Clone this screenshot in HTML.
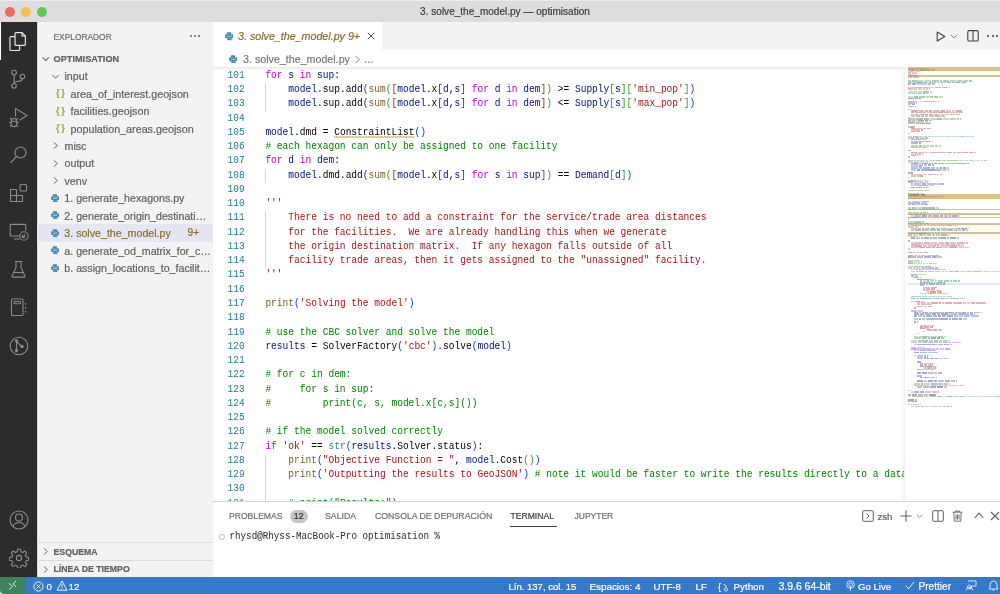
<!DOCTYPE html>
<html><head><meta charset="utf-8"><style>
*{margin:0;padding:0;box-sizing:border-box}
html,body{width:1000px;height:594px;overflow:hidden;background:#fff}
body{position:relative;font-family:'Liberation Sans', sans-serif}
div{-webkit-text-stroke:0.2px currentColor}
.ln,.cl{-webkit-text-stroke:0;transform:translateY(0.4px) scaleY(1.1);transform-origin:0 9.68px}
.abs{position:absolute}
.ln{position:absolute;left:213px;width:31.8px;text-align:right;font:9.55px/14.262px 'Liberation Mono', monospace;color:#237893;white-space:pre;height:14.262px}
.cl{position:absolute;left:265.4px;font:9.55px/14.262px 'Liberation Mono', monospace;color:#000;white-space:pre;height:14.262px}
.ig{position:absolute;left:265px;width:1px;background:#d8d8d8}
.ai svg{position:absolute}
</style></head><body>
<div style="position:absolute;left:0;top:0;width:1000px;height:594px;will-change:transform">
<!-- title bar -->
<div class="abs" style="left:0;top:0;width:1000px;height:22px;background:#dddddd;border-top:1px solid #ececec"></div>
<div class="abs" style="left:5px;top:6.8px;width:9.8px;height:9.8px;border-radius:50%;background:#ec6a5e"></div>
<div class="abs" style="left:21px;top:6.8px;width:9.8px;height:9.8px;border-radius:50%;background:#f4bf4f"></div>
<div class="abs" style="left:37px;top:6.8px;width:9.8px;height:9.8px;border-radius:50%;background:#61c554"></div>
<div class="abs" style="left:0;top:5px;width:1010px;text-align:center;font:400 10.05px/14px 'Liberation Sans', sans-serif;color:#3c3c3c">3. solve_the_model.py — optimisation</div>

<!-- activity bar -->
<div class="abs" style="left:0;top:22px;width:37px;height:555px;background:#2c2c2c"></div>
<div class="abs" style="left:0;top:22px;width:1.3px;height:37.5px;background:#ffffff"></div>
<div class="ai">
<svg style="left:8px;top:31px" width="20" height="22" viewBox="0 0 20 22" fill="none" stroke="#e8e8e8" stroke-width="1.15">
 <path d="M7.05 2.6 q0 -0.95 0.95 -0.95 H14 L17.35 5 V13.4 q0 0.95 -0.95 0.95 H8 q-0.95 0 -0.95 -0.95 Z"/>
 <path d="M14 1.65 V5 H17.35"/>
 <path d="M7.05 5.65 H2.9 q-0.95 0 -0.95 0.95 V18.5 q0 0.95 0.95 0.95 H10.7 q0.95 0 0.95 -0.95 V14.35"/>
</svg>
<svg style="left:9px;top:69px" width="19" height="20" viewBox="0 0 19 20" fill="none" stroke="#8b8b8b" stroke-width="1.1">
 <circle cx="5.1" cy="3.5" r="2.3"/><circle cx="5" cy="16.8" r="2.3"/><circle cx="13.4" cy="7.5" r="2.3"/>
 <path d="M5.1 5.8 v8.7"/><path d="M13.2 9.8 q0 1.8 -1.8 2.1 l-4.6 0.9 q-1.6 0.4 -1.8 1.7"/>
</svg>
<svg style="left:7.5px;top:107px" width="21" height="21" viewBox="0 0 21 21" fill="none" stroke="#8b8b8b" stroke-width="1.1">
 <path d="M7.5 9.5 V1.5 L19 8.5 L11.5 13.3"/>
 <path d="M3.3 14.3 q0 -2.8 2.7 -2.8 q2.7 0 2.7 2.8 v2.5 q0 2.8 -2.7 2.8 q-2.7 0 -2.7 -2.8z"/><path d="M3.3 14.3 h5.4"/>
 <path d="M3.3 15.5 h-2 M8.7 15.5 h2 M3.6 12.5 l-1.6 -1.2 M8.4 12.5 l1.6 -1.2 M3.6 18.3 l-1.6 1.2 M8.4 18.3 l1.6 1.2"/>
</svg>
<svg style="left:9px;top:145px" width="20" height="20" viewBox="0 0 20 20" fill="none" stroke="#8b8b8b" stroke-width="1.2">
 <circle cx="11.5" cy="7.5" r="5.5"/><path d="M7.5 11.5 L1.5 17.8"/>
</svg>
<svg style="left:8.5px;top:183px" width="20" height="20" viewBox="0 0 20 20" fill="none" stroke="#8b8b8b" stroke-width="1.1">
 <path d="M1.5 6.5 h6 v12 h-6z M7.5 12.5 h6 v6 h-6z M1.5 12.5 h6"/><rect x="11" y="1.5" width="6.5" height="6.5" rx="1"/>
</svg>
<svg style="left:8.5px;top:223px" width="21" height="19" viewBox="0 0 21 19" fill="none" stroke="#8b8b8b" stroke-width="1.1">
 <path d="M11 13 h-9 q-0.8 0 -0.8 -0.8 v-10 q0 -0.8 0.8 -0.8 h14 q0.8 0 0.8 0.8 v5.3"/><path d="M5 16 h6"/>
 <circle cx="15" cy="13" r="4.2"/><path d="M13.5 14.5 l3 -3 M13.5 12 v2.5 h2.5"/>
</svg>
<svg style="left:9.5px;top:260px" width="18" height="19" viewBox="0 0 18 19" fill="none" stroke="#8b8b8b" stroke-width="1.1">
 <path d="M5 1.5 h7 M6 1.5 v6 L2.2 15.8 q-0.5 1.3 0.8 1.3 h11 q1.3 0 0.8 -1.3 L11 7.5 v-6"/><path d="M3.6 12.5 h9.8"/>
</svg>
<svg style="left:10px;top:298px" width="18" height="19" viewBox="0 0 18 19" fill="none" stroke="#8b8b8b" stroke-width="1.1">
 <rect x="1.5" y="1" width="11.5" height="16.5" rx="1.3"/><rect x="4" y="3.5" width="6.5" height="2.2" rx="0.6"/>
 <path d="M15.5 5 v1.5 M15.5 9 v1.5 M15.5 13 v1.5" stroke-width="1.3"/>
</svg>
<svg style="left:8.5px;top:335.7px" width="20" height="20" viewBox="0 0 20 20" fill="none" stroke="#8b8b8b" stroke-width="1.1">
 <circle cx="10" cy="10" r="8.8"/><path d="M7.5 4.5 v10 M7.5 5.5 l5.5 5"/><circle cx="7.5" cy="4.8" r="1.1" fill="#8b8b8b"/><circle cx="7.5" cy="14.6" r="1.1" fill="#8b8b8b"/><circle cx="13" cy="10.5" r="1.1" fill="#8b8b8b"/>
</svg>
<svg style="left:8.8px;top:509.8px" width="20" height="20" viewBox="0 0 20 20" fill="none" stroke="#8b8b8b" stroke-width="1.1">
 <circle cx="10" cy="10" r="9"/><circle cx="10" cy="7.5" r="3.5"/><path d="M4 16.5 q1.5 -4 6 -4 q4.5 0 6 4"/>
</svg>
<svg style="left:8.5px;top:548px" width="20" height="20" viewBox="0 0 20 20" fill="none" stroke="#8b8b8b" stroke-width="1.1">
 <path d="M8.6 1.2 h2.8 l0.5 2.5 l1.7 0.8 l2.2 -1.5 l2 2 l-1.5 2.2 l0.8 1.7 l2.5 0.5 v2.8 l-2.5 0.5 l-0.8 1.7 l1.5 2.2 l-2 2 l-2.2 -1.5 l-1.7 0.8 l-0.5 2.5 h-2.8 l-0.5 -2.5 l-1.7 -0.8 l-2.2 1.5 l-2 -2 l1.5 -2.2 l-0.8 -1.7 l-2.5 -0.5 v-2.8 l2.5 -0.5 l0.8 -1.7 l-1.5 -2.2 l2 -2 l2.2 1.5 l1.7 -0.8z"/>
 <circle cx="10" cy="10" r="2.6"/>
</svg>
</div>

<!-- sidebar -->
<div class="abs" style="left:37px;top:22px;width:176px;height:555px;background:#f3f3f3;border-left:1px solid #d6d6d6">

</div>
<div class="abs" style="left:0;top:0;width:213px;height:577px;overflow:hidden">
<div style="position:absolute;left:53.5px;top:31px;font:400 8.4px 'Liberation Sans', sans-serif;color:#6f6f6f;line-height:12px">EXPLORADOR</div><div style="position:absolute;left:189.5px;top:35px;width:2px;height:2px;border-radius:50%;background:#616161"></div><div style="position:absolute;left:193.8px;top:35px;width:2px;height:2px;border-radius:50%;background:#616161"></div><div style="position:absolute;left:198.1px;top:35px;width:2px;height:2px;border-radius:50%;background:#616161"></div><svg style="position:absolute;left:40.5px;top:54.25px" width="9.5" height="9.5" viewBox="0 0 16 16"><path d="M2.5 5.5 L8 11 L13.5 5.5" fill="none" stroke="#555555" stroke-width="1.7"/></svg><div style="position:absolute;left:53.5px;margin-top:1.3px;top:52.75px;height:17.45px;line-height:17.45px;font:700 9.2px 'Liberation Sans', sans-serif;color:#616161;white-space:nowrap;">OPTIMISATION</div><svg style="position:absolute;left:51px;top:71.7px" width="9" height="9" viewBox="0 0 16 16"><path d="M2.5 5.5 L8 11 L13.5 5.5" fill="none" stroke="#505050" stroke-width="1.7"/></svg><div style="position:absolute;left:64.5px;top:70.20px;height:17.45px;line-height:17.45px;font:400 10.7px 'Liberation Sans', sans-serif;color:#616161;white-space:nowrap;">input</div><div style="position:absolute;left:56px;top:88.15px;font:700 9.3px 'Liberation Sans', sans-serif;color:#aaaa3c;letter-spacing:1.6px;line-height:11px">{}</div><div style="position:absolute;left:70.5px;top:87.65px;height:17.45px;line-height:17.45px;font:400 10.75px 'Liberation Sans', sans-serif;color:#616161;white-space:nowrap;">area_of_interest.geojson</div><div style="position:absolute;left:56px;top:105.6px;font:700 9.3px 'Liberation Sans', sans-serif;color:#aaaa3c;letter-spacing:1.6px;line-height:11px">{}</div><div style="position:absolute;left:70.5px;top:105.10px;height:17.45px;line-height:17.45px;font:400 10.75px 'Liberation Sans', sans-serif;color:#616161;white-space:nowrap;">facilities.geojson</div><div style="position:absolute;left:56px;top:123.05px;font:700 9.3px 'Liberation Sans', sans-serif;color:#aaaa3c;letter-spacing:1.6px;line-height:11px">{}</div><div style="position:absolute;left:70.5px;top:122.55px;height:17.45px;line-height:17.45px;font:400 10.75px 'Liberation Sans', sans-serif;color:#616161;white-space:nowrap;">population_areas.geojson</div><svg style="position:absolute;left:50.5px;top:141.3px" width="9" height="9" viewBox="0 0 16 16"><path d="M5.5 2.5 L11 8 L5.5 13.5" fill="none" stroke="#505050" stroke-width="1.7"/></svg><div style="position:absolute;left:64.5px;top:140.00px;height:17.45px;line-height:17.45px;font:400 10.7px 'Liberation Sans', sans-serif;color:#616161;white-space:nowrap;">misc</div><svg style="position:absolute;left:50.5px;top:158.75px" width="9" height="9" viewBox="0 0 16 16"><path d="M5.5 2.5 L11 8 L5.5 13.5" fill="none" stroke="#505050" stroke-width="1.7"/></svg><div style="position:absolute;left:64.5px;top:157.45px;height:17.45px;line-height:17.45px;font:400 10.7px 'Liberation Sans', sans-serif;color:#616161;white-space:nowrap;">output</div><svg style="position:absolute;left:50.5px;top:176.2px" width="9" height="9" viewBox="0 0 16 16"><path d="M5.5 2.5 L11 8 L5.5 13.5" fill="none" stroke="#505050" stroke-width="1.7"/></svg><div style="position:absolute;left:64.5px;top:174.90px;height:17.45px;line-height:17.45px;font:400 10.7px 'Liberation Sans', sans-serif;color:#616161;white-space:nowrap;">venv</div><div style="position:absolute;left:37px;top:224.25px;width:176px;height:17.45px;background:#e4e6f1"></div><svg style="position:absolute;left:51px;top:193.85px" width="8.3" height="8.3" viewBox="0 0 16 16"><path d="M5 0.4 H10.2 Q11.8 0.4 11.8 2 V5.8 Q11.8 7.3 10.3 7.3 H5.7 Q4 7.3 4 9 V11.8 H2 Q0.3 11.8 0.3 10.1 V6.1 Q0.3 4.4 2 4.4 H8.2 V3.8 H3.3 V2 Q3.3 0.4 5 0.4 Z" fill="#4a87b0"/><path d="M5 0.4 H10.2 Q11.8 0.4 11.8 2 V5.8 Q11.8 7.3 10.3 7.3 H5.7 Q4 7.3 4 9 V11.8 H2 Q0.3 11.8 0.3 10.1 V6.1 Q0.3 4.4 2 4.4 H8.2 V3.8 H3.3 V2 Q3.3 0.4 5 0.4 Z" fill="#4a87b0" transform="rotate(180 8 8)"/></svg><div style="position:absolute;left:64.3px;top:192.35px;height:17.45px;line-height:17.45px;font:400 10.65px 'Liberation Sans', sans-serif;color:#616161;white-space:nowrap;width:148px;overflow:hidden">1. generate_hexagons.py</div><svg style="position:absolute;left:51px;top:211.29999999999998px" width="8.3" height="8.3" viewBox="0 0 16 16"><path d="M5 0.4 H10.2 Q11.8 0.4 11.8 2 V5.8 Q11.8 7.3 10.3 7.3 H5.7 Q4 7.3 4 9 V11.8 H2 Q0.3 11.8 0.3 10.1 V6.1 Q0.3 4.4 2 4.4 H8.2 V3.8 H3.3 V2 Q3.3 0.4 5 0.4 Z" fill="#4a87b0"/><path d="M5 0.4 H10.2 Q11.8 0.4 11.8 2 V5.8 Q11.8 7.3 10.3 7.3 H5.7 Q4 7.3 4 9 V11.8 H2 Q0.3 11.8 0.3 10.1 V6.1 Q0.3 4.4 2 4.4 H8.2 V3.8 H3.3 V2 Q3.3 0.4 5 0.4 Z" fill="#4a87b0" transform="rotate(180 8 8)"/></svg><div style="position:absolute;left:64.3px;top:209.80px;height:17.45px;line-height:17.45px;font:400 10.65px 'Liberation Sans', sans-serif;color:#616161;white-space:nowrap;width:148px;overflow:hidden">2. generate_origin_destinati…</div><svg style="position:absolute;left:51px;top:228.75px" width="8.3" height="8.3" viewBox="0 0 16 16"><path d="M5 0.4 H10.2 Q11.8 0.4 11.8 2 V5.8 Q11.8 7.3 10.3 7.3 H5.7 Q4 7.3 4 9 V11.8 H2 Q0.3 11.8 0.3 10.1 V6.1 Q0.3 4.4 2 4.4 H8.2 V3.8 H3.3 V2 Q3.3 0.4 5 0.4 Z" fill="#4a87b0"/><path d="M5 0.4 H10.2 Q11.8 0.4 11.8 2 V5.8 Q11.8 7.3 10.3 7.3 H5.7 Q4 7.3 4 9 V11.8 H2 Q0.3 11.8 0.3 10.1 V6.1 Q0.3 4.4 2 4.4 H8.2 V3.8 H3.3 V2 Q3.3 0.4 5 0.4 Z" fill="#4a87b0" transform="rotate(180 8 8)"/></svg><div style="position:absolute;left:64.3px;top:227.25px;height:17.45px;line-height:17.45px;font:400 10.65px 'Liberation Sans', sans-serif;color:#8a6d2a;white-space:nowrap;width:148px;overflow:hidden">3. solve_the_model.py</div><svg style="position:absolute;left:51px;top:246.2px" width="8.3" height="8.3" viewBox="0 0 16 16"><path d="M5 0.4 H10.2 Q11.8 0.4 11.8 2 V5.8 Q11.8 7.3 10.3 7.3 H5.7 Q4 7.3 4 9 V11.8 H2 Q0.3 11.8 0.3 10.1 V6.1 Q0.3 4.4 2 4.4 H8.2 V3.8 H3.3 V2 Q3.3 0.4 5 0.4 Z" fill="#4a87b0"/><path d="M5 0.4 H10.2 Q11.8 0.4 11.8 2 V5.8 Q11.8 7.3 10.3 7.3 H5.7 Q4 7.3 4 9 V11.8 H2 Q0.3 11.8 0.3 10.1 V6.1 Q0.3 4.4 2 4.4 H8.2 V3.8 H3.3 V2 Q3.3 0.4 5 0.4 Z" fill="#4a87b0" transform="rotate(180 8 8)"/></svg><div style="position:absolute;left:64.3px;top:244.70px;height:17.45px;line-height:17.45px;font:400 10.65px 'Liberation Sans', sans-serif;color:#616161;white-space:nowrap;width:148px;overflow:hidden">a. generate_od_matrix_for_c…</div><svg style="position:absolute;left:51px;top:263.65px" width="8.3" height="8.3" viewBox="0 0 16 16"><path d="M5 0.4 H10.2 Q11.8 0.4 11.8 2 V5.8 Q11.8 7.3 10.3 7.3 H5.7 Q4 7.3 4 9 V11.8 H2 Q0.3 11.8 0.3 10.1 V6.1 Q0.3 4.4 2 4.4 H8.2 V3.8 H3.3 V2 Q3.3 0.4 5 0.4 Z" fill="#4a87b0"/><path d="M5 0.4 H10.2 Q11.8 0.4 11.8 2 V5.8 Q11.8 7.3 10.3 7.3 H5.7 Q4 7.3 4 9 V11.8 H2 Q0.3 11.8 0.3 10.1 V6.1 Q0.3 4.4 2 4.4 H8.2 V3.8 H3.3 V2 Q3.3 0.4 5 0.4 Z" fill="#4a87b0" transform="rotate(180 8 8)"/></svg><div style="position:absolute;left:64.3px;top:262.15px;height:17.45px;line-height:17.45px;font:400 10.65px 'Liberation Sans', sans-serif;color:#616161;white-space:nowrap;width:148px;overflow:hidden">b. assign_locations_to_facilit…</div><div style="position:absolute;left:187.5px;top:227.25px;height:17.45px;line-height:17.45px;font:400 10.3px 'Liberation Sans', sans-serif;color:#8a6d2a;white-space:nowrap;">9+</div><div style="position:absolute;left:37px;top:542px;width:176px;height:1px;background:#dcdcdc"></div><div style="position:absolute;left:37px;top:560.3px;width:176px;height:1px;background:#dcdcdc"></div><svg style="position:absolute;left:40.5px;top:547px" width="9" height="9" viewBox="0 0 16 16"><path d="M5.5 2.5 L11 8 L5.5 13.5" fill="none" stroke="#505050" stroke-width="1.7"/></svg><div style="position:absolute;left:53.5px;top:544.6px;font:700 8.73px 'Liberation Sans', sans-serif;color:#616161;line-height:14px">ESQUEMA</div><svg style="position:absolute;left:40.5px;top:564.5px" width="9" height="9" viewBox="0 0 16 16"><path d="M5.5 2.5 L11 8 L5.5 13.5" fill="none" stroke="#505050" stroke-width="1.7"/></svg><div style="position:absolute;left:53.5px;top:562.4px;font:700 8.73px 'Liberation Sans', sans-serif;color:#616161;line-height:14px">LÍNEA DE TIEMPO</div>
</div>

<!-- editor tabs -->
<div class="abs" style="left:213px;top:22px;width:787px;height:28px;background:#f3f3f3"></div>
<div class="abs" style="left:213px;top:22px;width:169px;height:28px;background:#ffffff"></div>
<svg style="position:absolute;left:224.5px;top:32px" width="8.5" height="8.5" viewBox="0 0 16 16"><path d="M5 0.4 H10.2 Q11.8 0.4 11.8 2 V5.8 Q11.8 7.3 10.3 7.3 H5.7 Q4 7.3 4 9 V11.8 H2 Q0.3 11.8 0.3 10.1 V6.1 Q0.3 4.4 2 4.4 H8.2 V3.8 H3.3 V2 Q3.3 0.4 5 0.4 Z" fill="#4a87b0"/><path d="M5 0.4 H10.2 Q11.8 0.4 11.8 2 V5.8 Q11.8 7.3 10.3 7.3 H5.7 Q4 7.3 4 9 V11.8 H2 Q0.3 11.8 0.3 10.1 V6.1 Q0.3 4.4 2 4.4 H8.2 V3.8 H3.3 V2 Q3.3 0.4 5 0.4 Z" fill="#4a87b0" transform="rotate(180 8 8)"/></svg>
<div class="abs" style="left:238px;top:29px;font:italic 400 10.7px/14px 'Liberation Sans', sans-serif;color:#8a6d2a;white-space:nowrap">3. solve_the_model.py 9+</div>
<svg style="position:absolute;left:366px;top:31px" width="10" height="10" viewBox="0 0 10 10"><path d="M1.8 1.8 L8.2 8.2 M8.2 1.8 L1.8 8.2" stroke="#4a4a4a" stroke-width="0.95"/></svg>
<svg style="position:absolute;left:936px;top:31px" width="10" height="11" viewBox="0 0 10 11"><path d="M1.2 1 L8.8 5.5 L1.2 10z" fill="none" stroke="#424242" stroke-width="1.1" stroke-linejoin="round"/></svg>
<svg style="position:absolute;left:950px;top:34px" width="8" height="5" viewBox="0 0 8 5"><path d="M0.8 0.8 L4 4 L7.2 0.8" fill="none" stroke="#7a7a7a" stroke-width="0.9"/></svg>
<svg style="position:absolute;left:966.5px;top:30px" width="12" height="12" viewBox="0 0 12 12"><rect x="0.8" y="0.6" width="10.4" height="10.4" rx="1.3" fill="none" stroke="#424242" stroke-width="1.1"/><path d="M6 0.6 V11" stroke="#424242" stroke-width="1.1"/></svg>
<div class="abs" style="left:987px;top:35px;width:2.2px;height:2.2px;border-radius:50%;background:#424242"></div>
<div class="abs" style="left:991.5px;top:35px;width:2.2px;height:2.2px;border-radius:50%;background:#424242"></div>
<div class="abs" style="left:996px;top:35px;width:2.2px;height:2.2px;border-radius:50%;background:#424242"></div>

<!-- breadcrumbs -->
<svg style="position:absolute;left:228.5px;top:54.5px" width="8.5" height="8.5" viewBox="0 0 16 16"><path d="M5 0.4 H10.2 Q11.8 0.4 11.8 2 V5.8 Q11.8 7.3 10.3 7.3 H5.7 Q4 7.3 4 9 V11.8 H2 Q0.3 11.8 0.3 10.1 V6.1 Q0.3 4.4 2 4.4 H8.2 V3.8 H3.3 V2 Q3.3 0.4 5 0.4 Z" fill="#4a87b0"/><path d="M5 0.4 H10.2 Q11.8 0.4 11.8 2 V5.8 Q11.8 7.3 10.3 7.3 H5.7 Q4 7.3 4 9 V11.8 H2 Q0.3 11.8 0.3 10.1 V6.1 Q0.3 4.4 2 4.4 H8.2 V3.8 H3.3 V2 Q3.3 0.4 5 0.4 Z" fill="#4a87b0" transform="rotate(180 8 8)"/></svg>
<div class="abs" style="left:243px;top:52px;font:400 10.69px/14px 'Liberation Sans', sans-serif;color:#777777;white-space:nowrap">3. solve_the_model.py</div>
<svg style="position:absolute;left:354px;top:54.5px" width="7" height="9" viewBox="0 0 7 9"><path d="M1.5 0.8 L5.2 4.5 L1.5 8.2" fill="none" stroke="#6f6f6f" stroke-width="0.9"/></svg>
<div class="abs" style="left:364px;top:52px;font:400 10.5px/14px 'Liberation Sans', sans-serif;color:#777777;letter-spacing:0.3px">...</div>
<div class="abs" style="left:213px;top:67px;width:690px;height:4px;background:linear-gradient(#e8e8e8,rgba(255,255,255,0))"></div>

<!-- code -->
<div class="abs" style="left:0;top:67px;width:904.3px;height:434px;overflow:hidden"><div class="abs" style="left:0;top:-67px;width:904.3px;height:600px">
<div class="ig" style="top:83.06px;height:28.52px"></div><div class="ig" style="top:168.63px;height:14.26px"></div><div class="ig" style="top:211.42px;height:57.05px"></div><div class="ig" style="top:453.87px;height:57.05px"></div>
<div class="ln" style="top:68.80px">101</div><div class="cl" style="top:68.80px"><span style="color:#af00db">for</span><span style="color:#000000"> </span><span style="color:#001080">s</span><span style="color:#000000"> </span><span style="color:#af00db">in</span><span style="color:#000000"> </span><span style="color:#001080">sup</span><span style="color:#000000">:</span></div><div class="ln" style="top:83.06px">102</div><div class="cl" style="top:83.06px"><span style="color:#000000"> </span><span style="color:#000000"> </span><span style="color:#000000"> </span><span style="color:#000000"> </span><span style="color:#001080">model</span><span style="color:#000000">.</span><span style="color:#000000">sup</span><span style="color:#000000">.</span><span style="color:#000000">add</span><span style="color:#0431fa">(</span><span style="color:#795e26">sum</span><span style="color:#319331">(</span><span style="color:#7b3814">[</span><span style="color:#001080">model</span><span style="color:#000000">.</span><span style="color:#000000">x</span><span style="color:#0431fa">[</span><span style="color:#001080">d</span><span style="color:#000000">,</span><span style="color:#001080">s</span><span style="color:#0431fa">]</span><span style="color:#000000"> </span><span style="color:#af00db">for</span><span style="color:#000000"> </span><span style="color:#001080">d</span><span style="color:#000000"> </span><span style="color:#af00db">in</span><span style="color:#000000"> </span><span style="color:#001080">dem</span><span style="color:#7b3814">]</span><span style="color:#319331">)</span><span style="color:#000000"> </span><span style="color:#000000">&gt;</span><span style="color:#000000">=</span><span style="color:#000000"> </span><span style="color:#001080">Supply</span><span style="color:#319331">[</span><span style="color:#001080">s</span><span style="color:#319331">]</span><span style="color:#319331">[</span><span style="color:#a31515">&#x27;min_pop&#x27;</span><span style="color:#319331">]</span><span style="color:#0431fa">)</span></div><div class="ln" style="top:97.32px">103</div><div class="cl" style="top:97.32px"><span style="color:#000000"> </span><span style="color:#000000"> </span><span style="color:#000000"> </span><span style="color:#000000"> </span><span style="color:#001080">model</span><span style="color:#000000">.</span><span style="color:#000000">sup</span><span style="color:#000000">.</span><span style="color:#000000">add</span><span style="color:#0431fa">(</span><span style="color:#795e26">sum</span><span style="color:#319331">(</span><span style="color:#7b3814">[</span><span style="color:#001080">model</span><span style="color:#000000">.</span><span style="color:#000000">x</span><span style="color:#0431fa">[</span><span style="color:#001080">d</span><span style="color:#000000">,</span><span style="color:#001080">s</span><span style="color:#0431fa">]</span><span style="color:#000000"> </span><span style="color:#af00db">for</span><span style="color:#000000"> </span><span style="color:#001080">d</span><span style="color:#000000"> </span><span style="color:#af00db">in</span><span style="color:#000000"> </span><span style="color:#001080">dem</span><span style="color:#7b3814">]</span><span style="color:#319331">)</span><span style="color:#000000"> </span><span style="color:#000000">&lt;</span><span style="color:#000000">=</span><span style="color:#000000"> </span><span style="color:#001080">Supply</span><span style="color:#319331">[</span><span style="color:#001080">s</span><span style="color:#319331">]</span><span style="color:#319331">[</span><span style="color:#a31515">&#x27;max_pop&#x27;</span><span style="color:#319331">]</span><span style="color:#0431fa">)</span></div><div class="ln" style="top:111.59px">104</div><div class="cl" style="top:111.59px"></div><div class="ln" style="top:125.85px">105</div><div class="cl" style="top:125.85px"><span style="color:#001080">model</span><span style="color:#000000">.</span><span style="color:#000000">dmd</span><span style="color:#000000"> </span><span style="color:#000000">=</span><span style="color:#000000"> </span><span style="color:#000000">ConstraintList</span><span style="color:#0431fa">(</span><span style="color:#0431fa">)</span></div><div class="ln" style="top:140.11px">106</div><div class="cl" style="top:140.11px"><span style="color:#008000"># each hexagon can only be assigned to one facility</span></div><div class="ln" style="top:154.37px">107</div><div class="cl" style="top:154.37px"><span style="color:#af00db">for</span><span style="color:#000000"> </span><span style="color:#001080">d</span><span style="color:#000000"> </span><span style="color:#af00db">in</span><span style="color:#000000"> </span><span style="color:#001080">dem</span><span style="color:#000000">:</span></div><div class="ln" style="top:168.63px">108</div><div class="cl" style="top:168.63px"><span style="color:#000000"> </span><span style="color:#000000"> </span><span style="color:#000000"> </span><span style="color:#000000"> </span><span style="color:#001080">model</span><span style="color:#000000">.</span><span style="color:#000000">dmd</span><span style="color:#000000">.</span><span style="color:#000000">add</span><span style="color:#0431fa">(</span><span style="color:#795e26">sum</span><span style="color:#319331">(</span><span style="color:#7b3814">[</span><span style="color:#001080">model</span><span style="color:#000000">.</span><span style="color:#000000">x</span><span style="color:#0431fa">[</span><span style="color:#001080">d</span><span style="color:#000000">,</span><span style="color:#001080">s</span><span style="color:#0431fa">]</span><span style="color:#000000"> </span><span style="color:#af00db">for</span><span style="color:#000000"> </span><span style="color:#001080">s</span><span style="color:#000000"> </span><span style="color:#af00db">in</span><span style="color:#000000"> </span><span style="color:#001080">sup</span><span style="color:#7b3814">]</span><span style="color:#319331">)</span><span style="color:#000000"> </span><span style="color:#000000">=</span><span style="color:#000000">=</span><span style="color:#000000"> </span><span style="color:#001080">Demand</span><span style="color:#319331">[</span><span style="color:#001080">d</span><span style="color:#319331">]</span><span style="color:#0431fa">)</span></div><div class="ln" style="top:182.90px">109</div><div class="cl" style="top:182.90px"></div><div class="ln" style="top:197.16px">110</div><div class="cl" style="top:197.16px"><span style="color:#a31515">&#x27;&#x27;&#x27;</span></div><div class="ln" style="top:211.42px">111</div><div class="cl" style="top:211.42px"><span style="color:#a31515">    There is no need to add a constraint for the service/trade area distances</span></div><div class="ln" style="top:225.68px">112</div><div class="cl" style="top:225.68px"><span style="color:#a31515">    for the facilities.  We are already handling this when we generate</span></div><div class="ln" style="top:239.94px">113</div><div class="cl" style="top:239.94px"><span style="color:#a31515">    the origin destination matrix.  If any hexagon falls outside of all</span></div><div class="ln" style="top:254.21px">114</div><div class="cl" style="top:254.21px"><span style="color:#a31515">    facility trade areas, then it gets assigned to the &quot;unassigned&quot; facility.</span></div><div class="ln" style="top:268.47px">115</div><div class="cl" style="top:268.47px"><span style="color:#a31515">&#x27;&#x27;&#x27;</span></div><div class="ln" style="top:282.73px">116</div><div class="cl" style="top:282.73px"></div><div class="ln" style="top:296.99px">117</div><div class="cl" style="top:296.99px"><span style="color:#795e26">print</span><span style="color:#0431fa">(</span><span style="color:#a31515">&#x27;Solving the model&#x27;</span><span style="color:#0431fa">)</span></div><div class="ln" style="top:311.25px">118</div><div class="cl" style="top:311.25px"></div><div class="ln" style="top:325.52px">119</div><div class="cl" style="top:325.52px"><span style="color:#008000"># use the CBC solver and solve the model</span></div><div class="ln" style="top:339.78px">120</div><div class="cl" style="top:339.78px"><span style="color:#001080">results</span><span style="color:#000000"> </span><span style="color:#000000">=</span><span style="color:#000000"> </span><span style="color:#000000">SolverFactory</span><span style="color:#0431fa">(</span><span style="color:#a31515">&#x27;cbc&#x27;</span><span style="color:#0431fa">)</span><span style="color:#000000">.</span><span style="color:#000000">solve</span><span style="color:#0431fa">(</span><span style="color:#001080">model</span><span style="color:#0431fa">)</span></div><div class="ln" style="top:354.04px">121</div><div class="cl" style="top:354.04px"></div><div class="ln" style="top:368.30px">122</div><div class="cl" style="top:368.30px"><span style="color:#008000"># for c in dem:</span></div><div class="ln" style="top:382.56px">123</div><div class="cl" style="top:382.56px"><span style="color:#008000">#     for s in sup:</span></div><div class="ln" style="top:396.83px">124</div><div class="cl" style="top:396.83px"><span style="color:#008000">#         print(c, s, model.x[c,s]())</span></div><div class="ln" style="top:411.09px">125</div><div class="cl" style="top:411.09px"></div><div class="ln" style="top:425.35px">126</div><div class="cl" style="top:425.35px"><span style="color:#008000"># if the model solved correctly</span></div><div class="ln" style="top:439.61px">127</div><div class="cl" style="top:439.61px"><span style="color:#af00db">if</span><span style="color:#000000"> </span><span style="color:#a31515">&#x27;ok&#x27;</span><span style="color:#000000"> </span><span style="color:#000000">=</span><span style="color:#000000">=</span><span style="color:#000000"> </span><span style="color:#267f99">str</span><span style="color:#0431fa">(</span><span style="color:#001080">results</span><span style="color:#000000">.</span><span style="color:#000000">Solver</span><span style="color:#000000">.</span><span style="color:#000000">status</span><span style="color:#0431fa">)</span><span style="color:#000000">:</span></div><div class="ln" style="top:453.87px">128</div><div class="cl" style="top:453.87px"><span style="color:#000000"> </span><span style="color:#000000"> </span><span style="color:#000000"> </span><span style="color:#000000"> </span><span style="color:#795e26">print</span><span style="color:#0431fa">(</span><span style="color:#a31515">&quot;Objective Function = &quot;</span><span style="color:#000000">,</span><span style="color:#000000"> </span><span style="color:#001080">model</span><span style="color:#000000">.</span><span style="color:#000000">Cost</span><span style="color:#319331">(</span><span style="color:#319331">)</span><span style="color:#0431fa">)</span></div><div class="ln" style="top:468.14px">129</div><div class="cl" style="top:468.14px"><span style="color:#000000"> </span><span style="color:#000000"> </span><span style="color:#000000"> </span><span style="color:#000000"> </span><span style="color:#795e26">print</span><span style="color:#0431fa">(</span><span style="color:#a31515">&#x27;Outputting the results to GeoJSON&#x27;</span><span style="color:#0431fa">)</span><span style="color:#000000"> </span><span style="color:#008000"># note it would be faster to write the results directly to a database</span></div><div class="ln" style="top:482.40px">130</div><div class="cl" style="top:482.40px"></div><div class="ln" style="top:496.66px">131</div><div class="cl" style="top:496.66px"><span style="color:#000000"> </span><span style="color:#000000"> </span><span style="color:#000000"> </span><span style="color:#000000"> </span><span style="color:#008000"># print(&quot;Results:&quot;)</span></div>
<svg style="position:absolute;left:334.16px;top:135.85px" width="82.2" height="3"><polyline points="0.00,0.0 1.60,2.0 3.20,0.0 4.80,2.0 6.40,0.0 8.00,2.0 9.60,0.0 11.20,2.0 12.80,0.0 14.40,2.0 16.00,0.0 17.60,2.0 19.20,0.0 20.80,2.0 22.40,0.0 24.00,2.0 25.60,0.0 27.20,2.0 28.80,0.0 30.40,2.0 32.00,0.0 33.60,2.0 35.20,0.0 36.80,2.0 38.40,0.0 40.00,2.0 41.60,0.0 43.20,2.0 44.80,0.0 46.40,2.0 48.00,0.0 49.60,2.0 51.20,0.0 52.80,2.0 54.40,0.0 56.00,2.0 57.60,0.0 59.20,2.0 60.80,0.0 62.40,2.0 64.00,0.0 65.60,2.0 67.20,0.0 68.80,2.0 70.40,0.0 72.00,2.0 73.60,0.0 75.20,2.0 76.80,0.0 78.40,2.0 80.00,0.0" fill="none" stroke="#c9a040" stroke-width="0.9"/></svg>
</div></div>

<!-- minimap -->
<div class="abs" style="left:901px;top:67px;width:4px;height:434px;background:linear-gradient(90deg,rgba(0,0,0,0),rgba(0,0,0,0.06))"></div>
<div class="abs" style="left:904px;top:0;width:96px;height:501px;overflow:hidden"><div style="position:absolute;left:3.5px;top:67.40px;width:100px;height:1.6px;background:#dcc08a"></div><div style="position:absolute;left:4.01px;top:67.50px;width:3.62px;height:1.45px;background:#8a7a50;opacity:0.31"></div><div style="position:absolute;left:8.43px;top:67.50px;width:5.25px;height:1.45px;background:#8a7a50;opacity:0.30"></div><div style="position:absolute;left:14.48px;top:67.50px;width:4.68px;height:1.45px;background:#8a7a50;opacity:0.36"></div><div style="position:absolute;left:19.96px;top:67.50px;width:2.29px;height:1.45px;background:#8a7a50;opacity:0.39"></div><div style="position:absolute;left:23.05px;top:67.50px;width:2.19px;height:1.45px;background:#8a7a50;opacity:0.38"></div><div style="position:absolute;left:3.5px;top:68.99px;width:100px;height:1.6px;background:#dcc08a"></div><div style="position:absolute;left:4.01px;top:69.09px;width:2.35px;height:1.45px;background:#8a7a50;opacity:0.30"></div><div style="position:absolute;left:7.16px;top:69.09px;width:4.12px;height:1.45px;background:#8a7a50;opacity:0.46"></div><div style="position:absolute;left:12.08px;top:69.09px;width:2.62px;height:1.45px;background:#8a7a50;opacity:0.33"></div><div style="position:absolute;left:15.50px;top:69.09px;width:5.14px;height:1.45px;background:#8a7a50;opacity:0.49"></div><div style="position:absolute;left:21.44px;top:69.09px;width:4.89px;height:1.45px;background:#8a7a50;opacity:0.37"></div><div style="position:absolute;left:27.12px;top:69.09px;width:4.21px;height:1.45px;background:#8a7a50;opacity:0.29"></div><div style="position:absolute;left:4.01px;top:70.67px;width:6.29px;height:1.45px;background:#b04ad8;opacity:0.34"></div><div style="position:absolute;left:11.10px;top:70.67px;width:2.72px;height:1.45px;background:#b04ad8;opacity:0.31"></div><div style="position:absolute;left:14.62px;top:70.67px;width:0.22px;height:1.45px;background:#b04ad8;opacity:0.46"></div><div style="position:absolute;left:4.01px;top:72.26px;width:2.90px;height:1.45px;background:#b04ad8;opacity:0.41"></div><div style="position:absolute;left:7.71px;top:72.26px;width:5.19px;height:1.45px;background:#b04ad8;opacity:0.36"></div><div style="position:absolute;left:4.01px;top:73.85px;width:4.74px;height:1.45px;background:#b04ad8;opacity:0.29"></div><div style="position:absolute;left:9.55px;top:73.85px;width:0.59px;height:1.45px;background:#b04ad8;opacity:0.33"></div><div style="position:absolute;left:3.5px;top:75.34px;width:100px;height:1.6px;background:#dcc08a"></div><div style="position:absolute;left:4.01px;top:75.44px;width:5.40px;height:1.45px;background:#8a7a50;opacity:0.37"></div><div style="position:absolute;left:10.21px;top:75.44px;width:3.46px;height:1.45px;background:#8a7a50;opacity:0.41"></div><div style="position:absolute;left:4.01px;top:77.02px;width:4.27px;height:1.45px;background:#b04ad8;opacity:0.35"></div><div style="position:absolute;left:9.08px;top:77.02px;width:5.77px;height:1.45px;background:#b04ad8;opacity:0.43"></div><div style="position:absolute;left:4.01px;top:80.20px;width:3.22px;height:1.45px;background:#3a9a3a;opacity:0.41"></div><div style="position:absolute;left:8.03px;top:80.20px;width:4.63px;height:1.45px;background:#3a9a3a;opacity:0.47"></div><div style="position:absolute;left:13.46px;top:80.20px;width:5.65px;height:1.45px;background:#3a9a3a;opacity:0.34"></div><div style="position:absolute;left:19.90px;top:80.20px;width:6.90px;height:1.45px;background:#3a9a3a;opacity:0.31"></div><div style="position:absolute;left:27.60px;top:80.20px;width:4.09px;height:1.45px;background:#3a9a3a;opacity:0.45"></div><div style="position:absolute;left:32.49px;top:80.20px;width:2.76px;height:1.45px;background:#3a9a3a;opacity:0.39"></div><div style="position:absolute;left:36.05px;top:80.20px;width:2.20px;height:1.45px;background:#3a9a3a;opacity:0.43"></div><div style="position:absolute;left:39.05px;top:80.20px;width:5.82px;height:1.45px;background:#3a9a3a;opacity:0.41"></div><div style="position:absolute;left:45.67px;top:80.20px;width:6.38px;height:1.45px;background:#3a9a3a;opacity:0.35"></div><div style="position:absolute;left:52.85px;top:80.20px;width:5.48px;height:1.45px;background:#3a9a3a;opacity:0.41"></div><div style="position:absolute;left:59.13px;top:80.20px;width:4.90px;height:1.45px;background:#3a9a3a;opacity:0.38"></div><div style="position:absolute;left:64.83px;top:80.20px;width:3.02px;height:1.45px;background:#3a9a3a;opacity:0.49"></div><div style="position:absolute;left:4.01px;top:81.78px;width:4.37px;height:1.45px;background:#3a4a9a;opacity:0.43"></div><div style="position:absolute;left:9.18px;top:81.78px;width:2.30px;height:1.45px;background:#3a4a9a;opacity:0.43"></div><div style="position:absolute;left:12.28px;top:81.78px;width:5.24px;height:1.45px;background:#3a4a9a;opacity:0.50"></div><div style="position:absolute;left:18.32px;top:81.78px;width:6.11px;height:1.45px;background:#3a4a9a;opacity:0.34"></div><div style="position:absolute;left:25.23px;top:81.78px;width:3.93px;height:1.45px;background:#3a4a9a;opacity:0.43"></div><div style="position:absolute;left:29.96px;top:81.78px;width:2.11px;height:1.45px;background:#3a4a9a;opacity:0.38"></div><div style="position:absolute;left:32.87px;top:81.78px;width:2.84px;height:1.45px;background:#3a4a9a;opacity:0.31"></div><div style="position:absolute;left:36.51px;top:81.78px;width:2.29px;height:1.45px;background:#3a4a9a;opacity:0.45"></div><div style="position:absolute;left:39.61px;top:81.78px;width:2.65px;height:1.45px;background:#3a4a9a;opacity:0.33"></div><div style="position:absolute;left:43.05px;top:81.78px;width:3.95px;height:1.45px;background:#3a4a9a;opacity:0.47"></div><div style="position:absolute;left:47.81px;top:81.78px;width:2.40px;height:1.45px;background:#3a4a9a;opacity:0.38"></div><div style="position:absolute;left:51.01px;top:81.78px;width:4.75px;height:1.45px;background:#3a4a9a;opacity:0.47"></div><div style="position:absolute;left:56.56px;top:81.78px;width:5.40px;height:1.45px;background:#3a4a9a;opacity:0.47"></div><div style="position:absolute;left:4.01px;top:83.37px;width:3.39px;height:1.45px;background:#3a4a9a;opacity:0.37"></div><div style="position:absolute;left:8.20px;top:83.37px;width:3.79px;height:1.45px;background:#3a4a9a;opacity:0.47"></div><div style="position:absolute;left:12.80px;top:83.37px;width:6.79px;height:1.45px;background:#3a4a9a;opacity:0.31"></div><div style="position:absolute;left:20.38px;top:83.37px;width:2.88px;height:1.45px;background:#3a4a9a;opacity:0.33"></div><div style="position:absolute;left:24.07px;top:83.37px;width:3.17px;height:1.45px;background:#3a4a9a;opacity:0.39"></div><div style="position:absolute;left:28.03px;top:83.37px;width:3.30px;height:1.45px;background:#3a4a9a;opacity:0.34"></div><div style="position:absolute;left:4.01px;top:86.54px;width:2.02px;height:1.45px;background:#3a9a3a;opacity:0.37"></div><div style="position:absolute;left:6.83px;top:86.54px;width:3.85px;height:1.45px;background:#3a9a3a;opacity:0.40"></div><div style="position:absolute;left:11.48px;top:86.54px;width:6.77px;height:1.45px;background:#3a9a3a;opacity:0.43"></div><div style="position:absolute;left:19.04px;top:86.54px;width:4.58px;height:1.45px;background:#3a9a3a;opacity:0.42"></div><div style="position:absolute;left:24.42px;top:86.54px;width:5.38px;height:1.45px;background:#3a9a3a;opacity:0.29"></div><div style="position:absolute;left:30.60px;top:86.54px;width:6.50px;height:1.45px;background:#3a9a3a;opacity:0.45"></div><div style="position:absolute;left:37.90px;top:86.54px;width:6.37px;height:1.45px;background:#3a9a3a;opacity:0.46"></div><div style="position:absolute;left:45.07px;top:86.54px;width:0.40px;height:1.45px;background:#3a9a3a;opacity:0.37"></div><div style="position:absolute;left:4.01px;top:88.13px;width:2.52px;height:1.45px;background:#b04848;opacity:0.42"></div><div style="position:absolute;left:7.33px;top:88.13px;width:2.31px;height:1.45px;background:#b04848;opacity:0.29"></div><div style="position:absolute;left:10.44px;top:88.13px;width:3.04px;height:1.45px;background:#b04848;opacity:0.32"></div><div style="position:absolute;left:14.28px;top:88.13px;width:3.70px;height:1.45px;background:#b04848;opacity:0.29"></div><div style="position:absolute;left:18.78px;top:88.13px;width:2.00px;height:1.45px;background:#b04848;opacity:0.31"></div><div style="position:absolute;left:21.58px;top:88.13px;width:2.51px;height:1.45px;background:#b04848;opacity:0.36"></div><div style="position:absolute;left:24.89px;top:88.13px;width:0.56px;height:1.45px;background:#b04848;opacity:0.47"></div><div style="position:absolute;left:4.01px;top:91.31px;width:5.07px;height:1.45px;background:#3a9a3a;opacity:0.31"></div><div style="position:absolute;left:9.88px;top:91.31px;width:3.26px;height:1.45px;background:#3a9a3a;opacity:0.36"></div><div style="position:absolute;left:13.94px;top:91.31px;width:3.82px;height:1.45px;background:#3a9a3a;opacity:0.31"></div><div style="position:absolute;left:18.56px;top:91.31px;width:6.24px;height:1.45px;background:#3a9a3a;opacity:0.50"></div><div style="position:absolute;left:25.61px;top:91.31px;width:2.20px;height:1.45px;background:#3a9a3a;opacity:0.39"></div><div style="position:absolute;left:4.01px;top:92.89px;width:2.43px;height:1.45px;background:#3a4a9a;opacity:0.30"></div><div style="position:absolute;left:7.24px;top:92.89px;width:3.71px;height:1.45px;background:#3a4a9a;opacity:0.34"></div><div style="position:absolute;left:11.75px;top:92.89px;width:6.14px;height:1.45px;background:#3a4a9a;opacity:0.32"></div><div style="position:absolute;left:18.70px;top:92.89px;width:2.12px;height:1.45px;background:#3a4a9a;opacity:0.49"></div><div style="position:absolute;left:21.61px;top:92.89px;width:2.66px;height:1.45px;background:#3a4a9a;opacity:0.31"></div><div style="position:absolute;left:4.01px;top:96.07px;width:4.72px;height:1.45px;background:#3a9a3a;opacity:0.29"></div><div style="position:absolute;left:9.53px;top:96.07px;width:4.64px;height:1.45px;background:#3a9a3a;opacity:0.50"></div><div style="position:absolute;left:14.97px;top:96.07px;width:6.32px;height:1.45px;background:#3a9a3a;opacity:0.43"></div><div style="position:absolute;left:22.08px;top:96.07px;width:3.31px;height:1.45px;background:#3a9a3a;opacity:0.36"></div><div style="position:absolute;left:26.19px;top:96.07px;width:2.84px;height:1.45px;background:#3a9a3a;opacity:0.45"></div><div style="position:absolute;left:29.82px;top:96.07px;width:4.66px;height:1.45px;background:#3a9a3a;opacity:0.45"></div><div style="position:absolute;left:35.29px;top:96.07px;width:3.65px;height:1.45px;background:#3a9a3a;opacity:0.33"></div><div style="position:absolute;left:4.01px;top:97.65px;width:6.06px;height:1.45px;background:#3a4a9a;opacity:0.50"></div><div style="position:absolute;left:10.87px;top:97.65px;width:6.26px;height:1.45px;background:#3a4a9a;opacity:0.46"></div><div style="position:absolute;left:4.01px;top:100.83px;width:6.09px;height:1.45px;background:#3a9a3a;opacity:0.44"></div><div style="position:absolute;left:10.90px;top:100.83px;width:3.13px;height:1.45px;background:#3a9a3a;opacity:0.39"></div><div style="position:absolute;left:14.83px;top:100.83px;width:3.78px;height:1.45px;background:#3a9a3a;opacity:0.29"></div><div style="position:absolute;left:19.41px;top:100.83px;width:2.14px;height:1.45px;background:#3a9a3a;opacity:0.34"></div><div style="position:absolute;left:22.35px;top:100.83px;width:3.30px;height:1.45px;background:#3a9a3a;opacity:0.43"></div><div style="position:absolute;left:26.45px;top:100.83px;width:6.78px;height:1.45px;background:#3a9a3a;opacity:0.38"></div><div style="position:absolute;left:34.03px;top:100.83px;width:0.84px;height:1.45px;background:#3a9a3a;opacity:0.50"></div><div style="position:absolute;left:4.01px;top:102.41px;width:6.78px;height:1.45px;background:#3a4a9a;opacity:0.36"></div><div style="position:absolute;left:11.58px;top:102.41px;width:0.32px;height:1.45px;background:#3a4a9a;opacity:0.33"></div><div style="position:absolute;left:4.01px;top:104.00px;width:2.98px;height:1.45px;background:#3a4a9a;opacity:0.32"></div><div style="position:absolute;left:7.79px;top:104.00px;width:3.52px;height:1.45px;background:#3a4a9a;opacity:0.48"></div><div style="position:absolute;left:4.01px;top:105.59px;width:6.20px;height:1.45px;background:#3a4a9a;opacity:0.39"></div><div style="position:absolute;left:11.01px;top:105.59px;width:0.30px;height:1.45px;background:#3a4a9a;opacity:0.46"></div><div style="position:absolute;left:4.01px;top:108.76px;width:2.00px;height:1.45px;background:#b04848;opacity:0.43"></div><div style="position:absolute;left:7.19px;top:110.35px;width:6.55px;height:1.45px;background:#b04848;opacity:0.45"></div><div style="position:absolute;left:14.54px;top:110.35px;width:5.75px;height:1.45px;background:#b04848;opacity:0.39"></div><div style="position:absolute;left:21.09px;top:110.35px;width:2.89px;height:1.45px;background:#b04848;opacity:0.45"></div><div style="position:absolute;left:24.78px;top:110.35px;width:3.66px;height:1.45px;background:#b04848;opacity:0.46"></div><div style="position:absolute;left:29.24px;top:110.35px;width:6.86px;height:1.45px;background:#b04848;opacity:0.37"></div><div style="position:absolute;left:36.90px;top:110.35px;width:4.01px;height:1.45px;background:#b04848;opacity:0.49"></div><div style="position:absolute;left:41.71px;top:110.35px;width:5.62px;height:1.45px;background:#b04848;opacity:0.32"></div><div style="position:absolute;left:48.13px;top:110.35px;width:2.64px;height:1.45px;background:#b04848;opacity:0.31"></div><div style="position:absolute;left:51.57px;top:110.35px;width:6.52px;height:1.45px;background:#b04848;opacity:0.46"></div><div style="position:absolute;left:7.19px;top:111.94px;width:2.73px;height:1.45px;background:#b04848;opacity:0.46"></div><div style="position:absolute;left:10.72px;top:111.94px;width:6.90px;height:1.45px;background:#b04848;opacity:0.42"></div><div style="position:absolute;left:18.42px;top:111.94px;width:3.75px;height:1.45px;background:#b04848;opacity:0.40"></div><div style="position:absolute;left:22.97px;top:111.94px;width:2.65px;height:1.45px;background:#b04848;opacity:0.28"></div><div style="position:absolute;left:26.43px;top:111.94px;width:6.85px;height:1.45px;background:#b04848;opacity:0.42"></div><div style="position:absolute;left:34.08px;top:111.94px;width:4.63px;height:1.45px;background:#b04848;opacity:0.49"></div><div style="position:absolute;left:39.52px;top:111.94px;width:4.17px;height:1.45px;background:#b04848;opacity:0.47"></div><div style="position:absolute;left:44.49px;top:111.94px;width:6.13px;height:1.45px;background:#b04848;opacity:0.33"></div><div style="position:absolute;left:51.42px;top:111.94px;width:3.26px;height:1.45px;background:#b04848;opacity:0.34"></div><div style="position:absolute;left:55.48px;top:111.94px;width:3.20px;height:1.45px;background:#b04848;opacity:0.41"></div><div style="position:absolute;left:7.19px;top:113.52px;width:3.30px;height:1.45px;background:#b04848;opacity:0.37"></div><div style="position:absolute;left:11.29px;top:113.52px;width:2.66px;height:1.45px;background:#b04848;opacity:0.48"></div><div style="position:absolute;left:14.74px;top:113.52px;width:3.77px;height:1.45px;background:#b04848;opacity:0.38"></div><div style="position:absolute;left:19.31px;top:113.52px;width:4.92px;height:1.45px;background:#b04848;opacity:0.48"></div><div style="position:absolute;left:25.03px;top:113.52px;width:4.10px;height:1.45px;background:#b04848;opacity:0.48"></div><div style="position:absolute;left:29.93px;top:113.52px;width:4.51px;height:1.45px;background:#b04848;opacity:0.40"></div><div style="position:absolute;left:35.24px;top:113.52px;width:4.62px;height:1.45px;background:#b04848;opacity:0.28"></div><div style="position:absolute;left:40.66px;top:113.52px;width:4.20px;height:1.45px;background:#b04848;opacity:0.32"></div><div style="position:absolute;left:45.66px;top:113.52px;width:2.02px;height:1.45px;background:#b04848;opacity:0.46"></div><div style="position:absolute;left:48.48px;top:113.52px;width:2.86px;height:1.45px;background:#b04848;opacity:0.38"></div><div style="position:absolute;left:52.14px;top:113.52px;width:3.93px;height:1.45px;background:#b04848;opacity:0.40"></div><div style="position:absolute;left:7.19px;top:115.11px;width:3.63px;height:1.45px;background:#b04848;opacity:0.39"></div><div style="position:absolute;left:11.62px;top:115.11px;width:4.78px;height:1.45px;background:#b04848;opacity:0.45"></div><div style="position:absolute;left:17.20px;top:115.11px;width:2.53px;height:1.45px;background:#b04848;opacity:0.40"></div><div style="position:absolute;left:20.53px;top:115.11px;width:3.24px;height:1.45px;background:#b04848;opacity:0.34"></div><div style="position:absolute;left:24.57px;top:115.11px;width:5.86px;height:1.45px;background:#b04848;opacity:0.39"></div><div style="position:absolute;left:31.23px;top:115.11px;width:4.81px;height:1.45px;background:#b04848;opacity:0.45"></div><div style="position:absolute;left:36.84px;top:115.11px;width:3.92px;height:1.45px;background:#b04848;opacity:0.38"></div><div style="position:absolute;left:4.01px;top:116.70px;width:2.00px;height:1.45px;background:#b04848;opacity:0.39"></div><div style="position:absolute;left:4.01px;top:118.28px;width:4.56px;height:1.45px;background:#3a9a3a;opacity:0.43"></div><div style="position:absolute;left:9.37px;top:118.28px;width:4.26px;height:1.45px;background:#3a9a3a;opacity:0.40"></div><div style="position:absolute;left:14.43px;top:118.28px;width:4.39px;height:1.45px;background:#3a9a3a;opacity:0.49"></div><div style="position:absolute;left:19.62px;top:118.28px;width:5.50px;height:1.45px;background:#3a9a3a;opacity:0.47"></div><div style="position:absolute;left:25.92px;top:118.28px;width:6.71px;height:1.45px;background:#3a9a3a;opacity:0.34"></div><div style="position:absolute;left:33.43px;top:118.28px;width:4.80px;height:1.45px;background:#3a9a3a;opacity:0.49"></div><div style="position:absolute;left:39.03px;top:118.28px;width:6.20px;height:1.45px;background:#3a9a3a;opacity:0.31"></div><div style="position:absolute;left:46.03px;top:118.28px;width:2.61px;height:1.45px;background:#3a9a3a;opacity:0.38"></div><div style="position:absolute;left:49.43px;top:118.28px;width:2.36px;height:1.45px;background:#3a9a3a;opacity:0.33"></div><div style="position:absolute;left:52.60px;top:118.28px;width:2.37px;height:1.45px;background:#3a9a3a;opacity:0.43"></div><div style="position:absolute;left:55.76px;top:118.28px;width:0.31px;height:1.45px;background:#3a9a3a;opacity:0.48"></div><div style="position:absolute;left:4.01px;top:119.87px;width:2.77px;height:1.45px;background:#3a4a9a;opacity:0.44"></div><div style="position:absolute;left:7.58px;top:119.87px;width:5.30px;height:1.45px;background:#3a4a9a;opacity:0.31"></div><div style="position:absolute;left:13.68px;top:119.87px;width:6.41px;height:1.45px;background:#3a4a9a;opacity:0.49"></div><div style="position:absolute;left:20.90px;top:119.87px;width:3.10px;height:1.45px;background:#3a4a9a;opacity:0.49"></div><div style="position:absolute;left:24.80px;top:119.87px;width:3.01px;height:1.45px;background:#3a4a9a;opacity:0.39"></div><div style="position:absolute;left:4.01px;top:121.46px;width:6.95px;height:1.45px;background:#b04848;opacity:0.46"></div><div style="position:absolute;left:11.76px;top:121.46px;width:2.81px;height:1.45px;background:#b04848;opacity:0.37"></div><div style="position:absolute;left:15.37px;top:121.46px;width:4.58px;height:1.45px;background:#b04848;opacity:0.35"></div><div style="position:absolute;left:20.74px;top:121.46px;width:2.98px;height:1.45px;background:#b04848;opacity:0.35"></div><div style="position:absolute;left:24.52px;top:121.46px;width:0.92px;height:1.45px;background:#b04848;opacity:0.28"></div><div style="position:absolute;left:4.01px;top:123.05px;width:4.77px;height:1.45px;background:#3a4a9a;opacity:0.38"></div><div style="position:absolute;left:9.58px;top:123.05px;width:2.09px;height:1.45px;background:#3a4a9a;opacity:0.35"></div><div style="position:absolute;left:12.47px;top:123.05px;width:5.12px;height:1.45px;background:#3a4a9a;opacity:0.39"></div><div style="position:absolute;left:18.39px;top:123.05px;width:2.32px;height:1.45px;background:#3a4a9a;opacity:0.50"></div><div style="position:absolute;left:21.51px;top:123.05px;width:5.94px;height:1.45px;background:#3a4a9a;opacity:0.49"></div><div style="position:absolute;left:4.01px;top:126.22px;width:2.52px;height:1.45px;background:#3a4a9a;opacity:0.34"></div><div style="position:absolute;left:7.33px;top:126.22px;width:2.20px;height:1.45px;background:#3a4a9a;opacity:0.45"></div><div style="position:absolute;left:10.33px;top:126.22px;width:0.98px;height:1.45px;background:#3a4a9a;opacity:0.31"></div><div style="position:absolute;left:7.19px;top:127.81px;width:4.11px;height:1.45px;background:#b04848;opacity:0.48"></div><div style="position:absolute;left:12.10px;top:127.81px;width:6.09px;height:1.45px;background:#b04848;opacity:0.34"></div><div style="position:absolute;left:19.00px;top:127.81px;width:2.75px;height:1.45px;background:#b04848;opacity:0.48"></div><div style="position:absolute;left:22.54px;top:127.81px;width:4.85px;height:1.45px;background:#b04848;opacity:0.43"></div><div style="position:absolute;left:7.19px;top:129.39px;width:2.45px;height:1.45px;background:#b04848;opacity:0.29"></div><div style="position:absolute;left:10.44px;top:129.39px;width:5.44px;height:1.45px;background:#b04848;opacity:0.37"></div><div style="position:absolute;left:16.68px;top:129.39px;width:2.36px;height:1.45px;background:#b04848;opacity:0.49"></div><div style="position:absolute;left:7.19px;top:130.98px;width:5.17px;height:1.45px;background:#b04848;opacity:0.46"></div><div style="position:absolute;left:13.16px;top:130.98px;width:2.42px;height:1.45px;background:#b04848;opacity:0.47"></div><div style="position:absolute;left:4.01px;top:132.57px;width:2.00px;height:1.45px;background:#b04848;opacity:0.47"></div><div style="position:absolute;left:4.01px;top:135.74px;width:4.27px;height:1.45px;background:#3a9a3a;opacity:0.35"></div><div style="position:absolute;left:9.08px;top:135.74px;width:4.77px;height:1.45px;background:#3a9a3a;opacity:0.48"></div><div style="position:absolute;left:14.64px;top:135.74px;width:3.34px;height:1.45px;background:#3a9a3a;opacity:0.31"></div><div style="position:absolute;left:18.78px;top:135.74px;width:4.63px;height:1.45px;background:#3a9a3a;opacity:0.33"></div><div style="position:absolute;left:24.22px;top:135.74px;width:2.55px;height:1.45px;background:#3a9a3a;opacity:0.32"></div><div style="position:absolute;left:27.56px;top:135.74px;width:2.25px;height:1.45px;background:#3a9a3a;opacity:0.32"></div><div style="position:absolute;left:30.62px;top:135.74px;width:3.56px;height:1.45px;background:#3a9a3a;opacity:0.35"></div><div style="position:absolute;left:34.98px;top:135.74px;width:5.80px;height:1.45px;background:#3a9a3a;opacity:0.34"></div><div style="position:absolute;left:41.57px;top:135.74px;width:4.50px;height:1.45px;background:#3a9a3a;opacity:0.32"></div><div style="position:absolute;left:46.87px;top:135.74px;width:3.74px;height:1.45px;background:#3a9a3a;opacity:0.28"></div><div style="position:absolute;left:51.41px;top:135.74px;width:3.25px;height:1.45px;background:#3a9a3a;opacity:0.28"></div><div style="position:absolute;left:55.46px;top:135.74px;width:5.67px;height:1.45px;background:#3a9a3a;opacity:0.40"></div><div style="position:absolute;left:61.93px;top:135.74px;width:2.95px;height:1.45px;background:#3a9a3a;opacity:0.38"></div><div style="position:absolute;left:65.67px;top:135.74px;width:4.53px;height:1.45px;background:#3a9a3a;opacity:0.30"></div><div style="position:absolute;left:4.01px;top:137.33px;width:6.09px;height:1.45px;background:#b04ad8;opacity:0.38"></div><div style="position:absolute;left:10.90px;top:137.33px;width:4.48px;height:1.45px;background:#b04ad8;opacity:0.46"></div><div style="position:absolute;left:16.18px;top:137.33px;width:3.97px;height:1.45px;background:#b04ad8;opacity:0.39"></div><div style="position:absolute;left:20.94px;top:137.33px;width:3.32px;height:1.45px;background:#b04ad8;opacity:0.50"></div><div style="position:absolute;left:7.19px;top:138.91px;width:3.71px;height:1.45px;background:#3a4a9a;opacity:0.46"></div><div style="position:absolute;left:11.70px;top:138.91px;width:5.53px;height:1.45px;background:#3a4a9a;opacity:0.42"></div><div style="position:absolute;left:18.04px;top:138.91px;width:3.88px;height:1.45px;background:#3a4a9a;opacity:0.36"></div><div style="position:absolute;left:7.19px;top:140.50px;width:2.27px;height:1.45px;background:#3a4a9a;opacity:0.31"></div><div style="position:absolute;left:10.26px;top:140.50px;width:2.35px;height:1.45px;background:#3a4a9a;opacity:0.44"></div><div style="position:absolute;left:13.42px;top:140.50px;width:3.28px;height:1.45px;background:#3a4a9a;opacity:0.32"></div><div style="position:absolute;left:17.49px;top:140.50px;width:2.42px;height:1.45px;background:#3a4a9a;opacity:0.47"></div><div style="position:absolute;left:20.72px;top:140.50px;width:6.35px;height:1.45px;background:#3a4a9a;opacity:0.43"></div><div style="position:absolute;left:27.87px;top:140.50px;width:1.11px;height:1.45px;background:#3a4a9a;opacity:0.33"></div><div style="position:absolute;left:7.19px;top:142.09px;width:3.47px;height:1.45px;background:#3a4a9a;opacity:0.38"></div><div style="position:absolute;left:11.45px;top:142.09px;width:2.79px;height:1.45px;background:#3a4a9a;opacity:0.38"></div><div style="position:absolute;left:15.04px;top:142.09px;width:2.16px;height:1.45px;background:#3a4a9a;opacity:0.49"></div><div style="position:absolute;left:7.19px;top:145.26px;width:6.86px;height:1.45px;background:#3a9a3a;opacity:0.40"></div><div style="position:absolute;left:14.85px;top:145.26px;width:3.22px;height:1.45px;background:#3a9a3a;opacity:0.49"></div><div style="position:absolute;left:18.87px;top:145.26px;width:3.55px;height:1.45px;background:#3a9a3a;opacity:0.36"></div><div style="position:absolute;left:23.22px;top:145.26px;width:2.01px;height:1.45px;background:#3a9a3a;opacity:0.36"></div><div style="position:absolute;left:26.03px;top:145.26px;width:4.37px;height:1.45px;background:#3a9a3a;opacity:0.39"></div><div style="position:absolute;left:31.20px;top:145.26px;width:3.00px;height:1.45px;background:#3a9a3a;opacity:0.39"></div><div style="position:absolute;left:35.01px;top:145.26px;width:2.02px;height:1.45px;background:#3a9a3a;opacity:0.34"></div><div style="position:absolute;left:7.19px;top:146.85px;width:2.45px;height:1.45px;background:#3a4a9a;opacity:0.37"></div><div style="position:absolute;left:10.44px;top:146.85px;width:2.21px;height:1.45px;background:#3a4a9a;opacity:0.28"></div><div style="position:absolute;left:13.45px;top:146.85px;width:3.52px;height:1.45px;background:#3a4a9a;opacity:0.33"></div><div style="position:absolute;left:17.77px;top:146.85px;width:4.93px;height:1.45px;background:#3a4a9a;opacity:0.40"></div><div style="position:absolute;left:4.01px;top:150.02px;width:2.59px;height:1.45px;background:#3a4a9a;opacity:0.42"></div><div style="position:absolute;left:7.19px;top:151.61px;width:5.58px;height:1.45px;background:#b04848;opacity:0.47"></div><div style="position:absolute;left:13.57px;top:151.61px;width:3.95px;height:1.45px;background:#b04848;opacity:0.35"></div><div style="position:absolute;left:18.32px;top:151.61px;width:6.92px;height:1.45px;background:#b04848;opacity:0.31"></div><div style="position:absolute;left:26.04px;top:151.61px;width:5.62px;height:1.45px;background:#b04848;opacity:0.42"></div><div style="position:absolute;left:32.46px;top:151.61px;width:2.22px;height:1.45px;background:#b04848;opacity:0.46"></div><div style="position:absolute;left:35.48px;top:151.61px;width:6.46px;height:1.45px;background:#b04848;opacity:0.42"></div><div style="position:absolute;left:42.74px;top:151.61px;width:5.67px;height:1.45px;background:#b04848;opacity:0.46"></div><div style="position:absolute;left:49.21px;top:151.61px;width:2.70px;height:1.45px;background:#b04848;opacity:0.40"></div><div style="position:absolute;left:52.71px;top:151.61px;width:4.52px;height:1.45px;background:#b04848;opacity:0.46"></div><div style="position:absolute;left:58.03px;top:151.61px;width:6.02px;height:1.45px;background:#b04848;opacity:0.46"></div><div style="position:absolute;left:64.85px;top:151.61px;width:4.92px;height:1.45px;background:#b04848;opacity:0.48"></div><div style="position:absolute;left:70.57px;top:151.61px;width:0.81px;height:1.45px;background:#b04848;opacity:0.43"></div><div style="position:absolute;left:7.19px;top:153.20px;width:3.15px;height:1.45px;background:#b04848;opacity:0.29"></div><div style="position:absolute;left:11.14px;top:153.20px;width:2.67px;height:1.45px;background:#b04848;opacity:0.36"></div><div style="position:absolute;left:14.60px;top:153.20px;width:2.52px;height:1.45px;background:#b04848;opacity:0.46"></div><div style="position:absolute;left:17.93px;top:153.20px;width:1.04px;height:1.45px;background:#b04848;opacity:0.42"></div><div style="position:absolute;left:7.19px;top:154.78px;width:5.13px;height:1.45px;background:#3a4a9a;opacity:0.43"></div><div style="position:absolute;left:13.12px;top:154.78px;width:1.72px;height:1.45px;background:#3a4a9a;opacity:0.28"></div><div style="position:absolute;left:4.01px;top:156.37px;width:2.00px;height:1.45px;background:#b04848;opacity:0.44"></div><div style="position:absolute;left:4.01px;top:159.55px;width:4.51px;height:1.45px;background:#3a9a3a;opacity:0.40"></div><div style="position:absolute;left:9.32px;top:159.55px;width:5.30px;height:1.45px;background:#3a9a3a;opacity:0.29"></div><div style="position:absolute;left:15.42px;top:159.55px;width:5.68px;height:1.45px;background:#3a9a3a;opacity:0.34"></div><div style="position:absolute;left:21.90px;top:159.55px;width:2.37px;height:1.45px;background:#3a9a3a;opacity:0.34"></div><div style="position:absolute;left:25.08px;top:159.55px;width:5.65px;height:1.45px;background:#3a9a3a;opacity:0.33"></div><div style="position:absolute;left:31.52px;top:159.55px;width:5.70px;height:1.45px;background:#3a9a3a;opacity:0.49"></div><div style="position:absolute;left:38.02px;top:159.55px;width:4.47px;height:1.45px;background:#3a9a3a;opacity:0.36"></div><div style="position:absolute;left:43.29px;top:159.55px;width:4.40px;height:1.45px;background:#3a9a3a;opacity:0.43"></div><div style="position:absolute;left:48.49px;top:159.55px;width:5.83px;height:1.45px;background:#3a9a3a;opacity:0.42"></div><div style="position:absolute;left:55.12px;top:159.55px;width:5.21px;height:1.45px;background:#3a9a3a;opacity:0.30"></div><div style="position:absolute;left:61.14px;top:159.55px;width:2.74px;height:1.45px;background:#3a9a3a;opacity:0.34"></div><div style="position:absolute;left:64.67px;top:159.55px;width:5.72px;height:1.45px;background:#3a9a3a;opacity:0.35"></div><div style="position:absolute;left:71.19px;top:159.55px;width:4.84px;height:1.45px;background:#3a9a3a;opacity:0.28"></div><div style="position:absolute;left:76.83px;top:159.55px;width:2.30px;height:1.45px;background:#3a9a3a;opacity:0.34"></div><div style="position:absolute;left:79.93px;top:159.55px;width:2.64px;height:1.45px;background:#3a9a3a;opacity:0.43"></div><div style="position:absolute;left:4.01px;top:161.13px;width:5.38px;height:1.45px;background:#b04ad8;opacity:0.34"></div><div style="position:absolute;left:10.19px;top:161.13px;width:4.58px;height:1.45px;background:#b04ad8;opacity:0.38"></div><div style="position:absolute;left:15.57px;top:161.13px;width:4.33px;height:1.45px;background:#b04ad8;opacity:0.31"></div><div style="position:absolute;left:20.70px;top:161.13px;width:3.57px;height:1.45px;background:#b04ad8;opacity:0.32"></div><div style="position:absolute;left:7.19px;top:162.72px;width:6.89px;height:1.45px;background:#3a4a9a;opacity:0.49"></div><div style="position:absolute;left:14.88px;top:162.72px;width:2.09px;height:1.45px;background:#3a4a9a;opacity:0.38"></div><div style="position:absolute;left:17.77px;top:162.72px;width:6.10px;height:1.45px;background:#3a4a9a;opacity:0.49"></div><div style="position:absolute;left:24.67px;top:162.72px;width:4.25px;height:1.45px;background:#3a4a9a;opacity:0.34"></div><div style="position:absolute;left:29.71px;top:162.72px;width:3.05px;height:1.45px;background:#3a4a9a;opacity:0.49"></div><div style="position:absolute;left:33.56px;top:162.72px;width:3.05px;height:1.45px;background:#3a4a9a;opacity:0.41"></div><div style="position:absolute;left:37.42px;top:162.72px;width:2.71px;height:1.45px;background:#3a4a9a;opacity:0.40"></div><div style="position:absolute;left:40.93px;top:162.72px;width:6.76px;height:1.45px;background:#3a4a9a;opacity:0.31"></div><div style="position:absolute;left:48.49px;top:162.72px;width:6.10px;height:1.45px;background:#3a4a9a;opacity:0.39"></div><div style="position:absolute;left:55.39px;top:162.72px;width:6.43px;height:1.45px;background:#3a4a9a;opacity:0.43"></div><div style="position:absolute;left:62.63px;top:162.72px;width:2.28px;height:1.45px;background:#3a4a9a;opacity:0.48"></div><div style="position:absolute;left:7.19px;top:164.31px;width:4.43px;height:1.45px;background:#3a4a9a;opacity:0.29"></div><div style="position:absolute;left:12.42px;top:164.31px;width:2.02px;height:1.45px;background:#3a4a9a;opacity:0.39"></div><div style="position:absolute;left:15.24px;top:164.31px;width:4.25px;height:1.45px;background:#3a4a9a;opacity:0.35"></div><div style="position:absolute;left:20.29px;top:164.31px;width:2.70px;height:1.45px;background:#3a4a9a;opacity:0.36"></div><div style="position:absolute;left:23.80px;top:164.31px;width:3.58px;height:1.45px;background:#3a4a9a;opacity:0.46"></div><div style="position:absolute;left:28.18px;top:164.31px;width:1.98px;height:1.45px;background:#3a4a9a;opacity:0.45"></div><div style="position:absolute;left:7.19px;top:165.89px;width:6.20px;height:1.45px;background:#3a4a9a;opacity:0.31"></div><div style="position:absolute;left:14.19px;top:165.89px;width:4.19px;height:1.45px;background:#3a4a9a;opacity:0.44"></div><div style="position:absolute;left:7.19px;top:167.48px;width:6.51px;height:1.45px;background:#3a4a9a;opacity:0.34"></div><div style="position:absolute;left:14.50px;top:167.48px;width:3.86px;height:1.45px;background:#3a4a9a;opacity:0.37"></div><div style="position:absolute;left:19.16px;top:167.48px;width:6.99px;height:1.45px;background:#3a4a9a;opacity:0.41"></div><div style="position:absolute;left:26.95px;top:167.48px;width:3.80px;height:1.45px;background:#3a4a9a;opacity:0.37"></div><div style="position:absolute;left:31.56px;top:167.48px;width:3.38px;height:1.45px;background:#3a4a9a;opacity:0.29"></div><div style="position:absolute;left:35.73px;top:167.48px;width:2.51px;height:1.45px;background:#3a4a9a;opacity:0.46"></div><div style="position:absolute;left:39.04px;top:167.48px;width:3.43px;height:1.45px;background:#3a4a9a;opacity:0.49"></div><div style="position:absolute;left:43.27px;top:167.48px;width:1.61px;height:1.45px;background:#3a4a9a;opacity:0.34"></div><div style="position:absolute;left:7.19px;top:169.07px;width:4.55px;height:1.45px;background:#3a4a9a;opacity:0.32"></div><div style="position:absolute;left:12.54px;top:169.07px;width:3.87px;height:1.45px;background:#3a4a9a;opacity:0.49"></div><div style="position:absolute;left:17.21px;top:169.07px;width:6.42px;height:1.45px;background:#3a4a9a;opacity:0.46"></div><div style="position:absolute;left:24.43px;top:169.07px;width:5.15px;height:1.45px;background:#3a4a9a;opacity:0.48"></div><div style="position:absolute;left:30.39px;top:169.07px;width:6.70px;height:1.45px;background:#3a4a9a;opacity:0.40"></div><div style="position:absolute;left:37.89px;top:169.07px;width:5.60px;height:1.45px;background:#3a4a9a;opacity:0.29"></div><div style="position:absolute;left:44.29px;top:169.07px;width:0.59px;height:1.45px;background:#3a4a9a;opacity:0.38"></div><div style="position:absolute;left:4.01px;top:172.24px;width:4.95px;height:1.45px;background:#3a4a9a;opacity:0.42"></div><div style="position:absolute;left:7.19px;top:173.83px;width:3.43px;height:1.45px;background:#b04848;opacity:0.29"></div><div style="position:absolute;left:11.42px;top:173.83px;width:6.63px;height:1.45px;background:#b04848;opacity:0.31"></div><div style="position:absolute;left:18.85px;top:173.83px;width:4.36px;height:1.45px;background:#b04848;opacity:0.36"></div><div style="position:absolute;left:24.02px;top:173.83px;width:3.49px;height:1.45px;background:#b04848;opacity:0.44"></div><div style="position:absolute;left:28.30px;top:173.83px;width:6.88px;height:1.45px;background:#b04848;opacity:0.34"></div><div style="position:absolute;left:35.99px;top:173.83px;width:3.01px;height:1.45px;background:#b04848;opacity:0.35"></div><div style="position:absolute;left:7.19px;top:175.42px;width:4.79px;height:1.45px;background:#b04848;opacity:0.37"></div><div style="position:absolute;left:12.78px;top:175.42px;width:2.84px;height:1.45px;background:#b04848;opacity:0.32"></div><div style="position:absolute;left:16.41px;top:175.42px;width:2.56px;height:1.45px;background:#b04848;opacity:0.48"></div><div style="position:absolute;left:4.01px;top:177.00px;width:2.00px;height:1.45px;background:#b04848;opacity:0.33"></div><div style="position:absolute;left:4.01px;top:180.18px;width:6.53px;height:1.45px;background:#3a9a3a;opacity:0.50"></div><div style="position:absolute;left:11.34px;top:180.18px;width:4.25px;height:1.45px;background:#3a9a3a;opacity:0.31"></div><div style="position:absolute;left:16.39px;top:180.18px;width:2.96px;height:1.45px;background:#3a9a3a;opacity:0.30"></div><div style="position:absolute;left:20.15px;top:180.18px;width:3.71px;height:1.45px;background:#3a9a3a;opacity:0.30"></div><div style="position:absolute;left:24.66px;top:180.18px;width:0.20px;height:1.45px;background:#3a9a3a;opacity:0.34"></div><div style="position:absolute;left:4.01px;top:181.76px;width:4.85px;height:1.45px;background:#b04ad8;opacity:0.48"></div><div style="position:absolute;left:9.66px;top:181.76px;width:5.75px;height:1.45px;background:#b04ad8;opacity:0.37"></div><div style="position:absolute;left:16.21px;top:181.76px;width:4.07px;height:1.45px;background:#b04ad8;opacity:0.40"></div><div style="position:absolute;left:21.08px;top:181.76px;width:2.60px;height:1.45px;background:#b04ad8;opacity:0.35"></div><div style="position:absolute;left:7.19px;top:183.35px;width:2.31px;height:1.45px;background:#3a4a9a;opacity:0.34"></div><div style="position:absolute;left:10.30px;top:183.35px;width:6.84px;height:1.45px;background:#3a4a9a;opacity:0.31"></div><div style="position:absolute;left:17.94px;top:183.35px;width:4.52px;height:1.45px;background:#3a4a9a;opacity:0.42"></div><div style="position:absolute;left:23.26px;top:183.35px;width:6.31px;height:1.45px;background:#3a4a9a;opacity:0.33"></div><div style="position:absolute;left:30.37px;top:183.35px;width:3.36px;height:1.45px;background:#3a4a9a;opacity:0.33"></div><div style="position:absolute;left:34.52px;top:183.35px;width:4.00px;height:1.45px;background:#3a4a9a;opacity:0.38"></div><div style="position:absolute;left:39.32px;top:183.35px;width:0.85px;height:1.45px;background:#3a4a9a;opacity:0.47"></div><div style="position:absolute;left:7.19px;top:184.94px;width:6.36px;height:1.45px;background:#3a4a9a;opacity:0.28"></div><div style="position:absolute;left:14.35px;top:184.94px;width:2.16px;height:1.45px;background:#3a4a9a;opacity:0.44"></div><div style="position:absolute;left:17.32px;top:184.94px;width:6.48px;height:1.45px;background:#3a4a9a;opacity:0.38"></div><div style="position:absolute;left:24.59px;top:184.94px;width:4.94px;height:1.45px;background:#3a4a9a;opacity:0.28"></div><div style="position:absolute;left:7.19px;top:186.52px;width:3.96px;height:1.45px;background:#3a4a9a;opacity:0.48"></div><div style="position:absolute;left:11.95px;top:186.52px;width:6.13px;height:1.45px;background:#3a4a9a;opacity:0.47"></div><div style="position:absolute;left:18.88px;top:186.52px;width:5.98px;height:1.45px;background:#3a4a9a;opacity:0.33"></div><div style="position:absolute;left:4.01px;top:189.70px;width:2.55px;height:1.45px;background:#8a7a50;opacity:0.31"></div><div style="position:absolute;left:7.35px;top:189.70px;width:4.61px;height:1.45px;background:#8a7a50;opacity:0.43"></div><div style="position:absolute;left:12.77px;top:189.70px;width:6.71px;height:1.45px;background:#8a7a50;opacity:0.44"></div><div style="position:absolute;left:20.27px;top:189.70px;width:5.17px;height:1.45px;background:#8a7a50;opacity:0.45"></div><div style="position:absolute;left:4.01px;top:192.87px;width:4.29px;height:1.45px;background:#3a9a3a;opacity:0.40"></div><div style="position:absolute;left:9.10px;top:192.87px;width:2.20px;height:1.45px;background:#3a9a3a;opacity:0.45"></div><div style="position:absolute;left:12.09px;top:192.87px;width:3.16px;height:1.45px;background:#3a9a3a;opacity:0.48"></div><div style="position:absolute;left:16.06px;top:192.87px;width:4.09px;height:1.45px;background:#3a9a3a;opacity:0.35"></div><div style="position:absolute;left:3.5px;top:194.36px;width:100px;height:1.6px;background:#dcc08a"></div><div style="position:absolute;left:4.01px;top:194.46px;width:2.64px;height:1.45px;background:#3a4a9a;opacity:0.34"></div><div style="position:absolute;left:7.45px;top:194.46px;width:5.18px;height:1.45px;background:#3a4a9a;opacity:0.43"></div><div style="position:absolute;left:13.43px;top:194.46px;width:2.56px;height:1.45px;background:#3a4a9a;opacity:0.30"></div><div style="position:absolute;left:16.79px;top:194.46px;width:4.62px;height:1.45px;background:#3a4a9a;opacity:0.41"></div><div style="position:absolute;left:3.5px;top:195.95px;width:100px;height:1.6px;background:#dcc08a"></div><div style="position:absolute;left:4.01px;top:196.05px;width:3.94px;height:1.45px;background:#8a7a50;opacity:0.33"></div><div style="position:absolute;left:8.75px;top:196.05px;width:5.01px;height:1.45px;background:#8a7a50;opacity:0.28"></div><div style="position:absolute;left:14.56px;top:196.05px;width:3.51px;height:1.45px;background:#8a7a50;opacity:0.38"></div><div style="position:absolute;left:18.86px;top:196.05px;width:6.79px;height:1.45px;background:#8a7a50;opacity:0.42"></div><div style="position:absolute;left:26.46px;top:196.05px;width:6.42px;height:1.45px;background:#8a7a50;opacity:0.38"></div><div style="position:absolute;left:33.68px;top:196.05px;width:3.17px;height:1.45px;background:#8a7a50;opacity:0.33"></div><div style="position:absolute;left:37.65px;top:196.05px;width:0.75px;height:1.45px;background:#8a7a50;opacity:0.44"></div><div style="position:absolute;left:3.5px;top:197.53px;width:100px;height:1.6px;background:#dcc08a"></div><div style="position:absolute;left:4.01px;top:197.63px;width:3.54px;height:1.45px;background:#8a7a50;opacity:0.28"></div><div style="position:absolute;left:8.35px;top:197.63px;width:4.49px;height:1.45px;background:#8a7a50;opacity:0.43"></div><div style="position:absolute;left:13.64px;top:197.63px;width:4.10px;height:1.45px;background:#8a7a50;opacity:0.34"></div><div style="position:absolute;left:18.54px;top:197.63px;width:1.02px;height:1.45px;background:#8a7a50;opacity:0.48"></div><div style="position:absolute;left:4.01px;top:200.81px;width:3.13px;height:1.45px;background:#3a9a3a;opacity:0.29"></div><div style="position:absolute;left:7.94px;top:200.81px;width:3.69px;height:1.45px;background:#3a9a3a;opacity:0.37"></div><div style="position:absolute;left:12.43px;top:200.81px;width:5.41px;height:1.45px;background:#3a9a3a;opacity:0.32"></div><div style="position:absolute;left:18.65px;top:200.81px;width:5.99px;height:1.45px;background:#3a9a3a;opacity:0.44"></div><div style="position:absolute;left:4.01px;top:202.40px;width:4.52px;height:1.45px;background:#3a4a9a;opacity:0.33"></div><div style="position:absolute;left:9.33px;top:202.40px;width:6.85px;height:1.45px;background:#3a4a9a;opacity:0.35"></div><div style="position:absolute;left:16.98px;top:202.40px;width:6.10px;height:1.45px;background:#3a4a9a;opacity:0.33"></div><div style="position:absolute;left:4.01px;top:203.98px;width:3.11px;height:1.45px;background:#3a4a9a;opacity:0.45"></div><div style="position:absolute;left:7.92px;top:203.98px;width:3.47px;height:1.45px;background:#3a4a9a;opacity:0.49"></div><div style="position:absolute;left:12.19px;top:203.98px;width:4.48px;height:1.45px;background:#3a4a9a;opacity:0.32"></div><div style="position:absolute;left:17.47px;top:203.98px;width:3.12px;height:1.45px;background:#3a4a9a;opacity:0.37"></div><div style="position:absolute;left:21.39px;top:203.98px;width:2.29px;height:1.45px;background:#3a4a9a;opacity:0.49"></div><div style="position:absolute;left:4.01px;top:207.16px;width:2.73px;height:1.45px;background:#3a9a3a;opacity:0.37"></div><div style="position:absolute;left:7.54px;top:207.16px;width:3.06px;height:1.45px;background:#3a9a3a;opacity:0.49"></div><div style="position:absolute;left:11.41px;top:207.16px;width:2.71px;height:1.45px;background:#3a9a3a;opacity:0.29"></div><div style="position:absolute;left:14.92px;top:207.16px;width:2.30px;height:1.45px;background:#3a9a3a;opacity:0.37"></div><div style="position:absolute;left:18.02px;top:207.16px;width:6.49px;height:1.45px;background:#3a9a3a;opacity:0.47"></div><div style="position:absolute;left:25.31px;top:207.16px;width:5.66px;height:1.45px;background:#3a9a3a;opacity:0.50"></div><div style="position:absolute;left:31.77px;top:207.16px;width:3.10px;height:1.45px;background:#3a9a3a;opacity:0.35"></div><div style="position:absolute;left:3.5px;top:208.64px;width:100px;height:1.6px;background:#dcc08a"></div><div style="position:absolute;left:4.01px;top:208.74px;width:2.93px;height:1.45px;background:#8a7a50;opacity:0.49"></div><div style="position:absolute;left:7.74px;top:208.74px;width:5.73px;height:1.45px;background:#8a7a50;opacity:0.29"></div><div style="position:absolute;left:14.27px;top:208.74px;width:5.32px;height:1.45px;background:#8a7a50;opacity:0.36"></div><div style="position:absolute;left:20.39px;top:208.74px;width:3.87px;height:1.45px;background:#8a7a50;opacity:0.35"></div><div style="position:absolute;left:25.06px;top:208.74px;width:2.85px;height:1.45px;background:#8a7a50;opacity:0.28"></div><div style="position:absolute;left:28.71px;top:208.74px;width:3.40px;height:1.45px;background:#8a7a50;opacity:0.36"></div><div style="position:absolute;left:32.91px;top:208.74px;width:6.78px;height:1.45px;background:#8a7a50;opacity:0.31"></div><div style="position:absolute;left:40.48px;top:208.74px;width:0.86px;height:1.45px;background:#8a7a50;opacity:0.33"></div><div style="position:absolute;left:4.01px;top:211.92px;width:3.78px;height:1.45px;background:#3a9a3a;opacity:0.46"></div><div style="position:absolute;left:8.59px;top:211.92px;width:6.11px;height:1.45px;background:#3a9a3a;opacity:0.38"></div><div style="position:absolute;left:15.50px;top:211.92px;width:2.25px;height:1.45px;background:#3a9a3a;opacity:0.38"></div><div style="position:absolute;left:18.55px;top:211.92px;width:3.86px;height:1.45px;background:#3a9a3a;opacity:0.48"></div><div style="position:absolute;left:23.21px;top:211.92px;width:1.06px;height:1.45px;background:#3a9a3a;opacity:0.36"></div><div style="position:absolute;left:3.5px;top:213.40px;width:100px;height:1.6px;background:#dcc08a"></div><div style="position:absolute;left:4.01px;top:213.50px;width:6.48px;height:1.45px;background:#8a7a50;opacity:0.29"></div><div style="position:absolute;left:11.29px;top:213.50px;width:4.05px;height:1.45px;background:#8a7a50;opacity:0.46"></div><div style="position:absolute;left:16.15px;top:213.50px;width:5.76px;height:1.45px;background:#8a7a50;opacity:0.29"></div><div style="position:absolute;left:7.19px;top:215.09px;width:2.17px;height:1.45px;background:#3a4a9a;opacity:0.29"></div><div style="position:absolute;left:10.16px;top:215.09px;width:6.60px;height:1.45px;background:#3a4a9a;opacity:0.34"></div><div style="position:absolute;left:17.56px;top:215.09px;width:5.74px;height:1.45px;background:#3a4a9a;opacity:0.48"></div><div style="position:absolute;left:24.10px;top:215.09px;width:3.70px;height:1.45px;background:#3a4a9a;opacity:0.34"></div><div style="position:absolute;left:28.60px;top:215.09px;width:6.79px;height:1.45px;background:#3a4a9a;opacity:0.42"></div><div style="position:absolute;left:36.18px;top:215.09px;width:3.31px;height:1.45px;background:#3a4a9a;opacity:0.44"></div><div style="position:absolute;left:40.30px;top:215.09px;width:3.58px;height:1.45px;background:#3a4a9a;opacity:0.34"></div><div style="position:absolute;left:44.68px;top:215.09px;width:2.02px;height:1.45px;background:#3a4a9a;opacity:0.45"></div><div style="position:absolute;left:47.50px;top:215.09px;width:6.58px;height:1.45px;background:#3a4a9a;opacity:0.42"></div><div style="position:absolute;left:54.88px;top:215.09px;width:1.19px;height:1.45px;background:#3a4a9a;opacity:0.29"></div><div style="position:absolute;left:3.5px;top:216.58px;width:100px;height:1.6px;background:#dcc08a"></div><div style="position:absolute;left:4.01px;top:216.68px;width:3.17px;height:1.45px;background:#8a7a50;opacity:0.38"></div><div style="position:absolute;left:7.98px;top:216.68px;width:6.78px;height:1.45px;background:#8a7a50;opacity:0.49"></div><div style="position:absolute;left:15.56px;top:216.68px;width:3.93px;height:1.45px;background:#8a7a50;opacity:0.34"></div><div style="position:absolute;left:4.01px;top:218.26px;width:0.82px;height:1.45px;background:#555555;opacity:0.39"></div><div style="position:absolute;left:4.01px;top:221.44px;width:6.64px;height:1.45px;background:#3a9a3a;opacity:0.32"></div><div style="position:absolute;left:11.45px;top:221.44px;width:6.01px;height:1.45px;background:#3a9a3a;opacity:0.44"></div><div style="position:absolute;left:18.26px;top:221.44px;width:1.88px;height:1.45px;background:#3a9a3a;opacity:0.45"></div><div style="position:absolute;left:3.5px;top:222.93px;width:100px;height:1.6px;background:#dcc08a"></div><div style="position:absolute;left:4.01px;top:223.03px;width:5.04px;height:1.45px;background:#8a7a50;opacity:0.35"></div><div style="position:absolute;left:9.85px;top:223.03px;width:3.60px;height:1.45px;background:#8a7a50;opacity:0.36"></div><div style="position:absolute;left:14.24px;top:223.03px;width:5.91px;height:1.45px;background:#8a7a50;opacity:0.30"></div><div style="position:absolute;left:20.95px;top:223.03px;width:2.99px;height:1.45px;background:#8a7a50;opacity:0.45"></div><div style="position:absolute;left:24.74px;top:223.03px;width:0.71px;height:1.45px;background:#8a7a50;opacity:0.29"></div><div style="position:absolute;left:4.01px;top:224.61px;width:2.17px;height:1.45px;background:#3a9a3a;opacity:0.40"></div><div style="position:absolute;left:6.98px;top:224.61px;width:3.63px;height:1.45px;background:#3a9a3a;opacity:0.50"></div><div style="position:absolute;left:11.41px;top:224.61px;width:6.42px;height:1.45px;background:#3a9a3a;opacity:0.50"></div><div style="position:absolute;left:18.62px;top:224.61px;width:3.32px;height:1.45px;background:#3a9a3a;opacity:0.30"></div><div style="position:absolute;left:22.75px;top:224.61px;width:2.48px;height:1.45px;background:#3a9a3a;opacity:0.39"></div><div style="position:absolute;left:26.03px;top:224.61px;width:5.55px;height:1.45px;background:#3a9a3a;opacity:0.38"></div><div style="position:absolute;left:32.38px;top:224.61px;width:3.17px;height:1.45px;background:#3a9a3a;opacity:0.37"></div><div style="position:absolute;left:36.35px;top:224.61px;width:5.10px;height:1.45px;background:#3a9a3a;opacity:0.43"></div><div style="position:absolute;left:42.25px;top:224.61px;width:5.74px;height:1.45px;background:#3a9a3a;opacity:0.47"></div><div style="position:absolute;left:48.79px;top:224.61px;width:4.92px;height:1.45px;background:#3a9a3a;opacity:0.31"></div><div style="position:absolute;left:4.01px;top:226.20px;width:6.20px;height:1.45px;background:#b04ad8;opacity:0.34"></div><div style="position:absolute;left:11.01px;top:226.20px;width:2.65px;height:1.45px;background:#b04ad8;opacity:0.36"></div><div style="position:absolute;left:7.19px;top:227.79px;width:5.69px;height:1.45px;background:#3a4a9a;opacity:0.32"></div><div style="position:absolute;left:13.68px;top:227.79px;width:3.24px;height:1.45px;background:#3a4a9a;opacity:0.33"></div><div style="position:absolute;left:17.72px;top:227.79px;width:2.77px;height:1.45px;background:#3a4a9a;opacity:0.47"></div><div style="position:absolute;left:21.28px;top:227.79px;width:4.89px;height:1.45px;background:#3a4a9a;opacity:0.35"></div><div style="position:absolute;left:26.98px;top:227.79px;width:3.98px;height:1.45px;background:#3a4a9a;opacity:0.50"></div><div style="position:absolute;left:31.76px;top:227.79px;width:4.54px;height:1.45px;background:#3a4a9a;opacity:0.33"></div><div style="position:absolute;left:37.09px;top:227.79px;width:6.04px;height:1.45px;background:#3a4a9a;opacity:0.42"></div><div style="position:absolute;left:43.93px;top:227.79px;width:6.95px;height:1.45px;background:#3a4a9a;opacity:0.30"></div><div style="position:absolute;left:51.69px;top:227.79px;width:4.37px;height:1.45px;background:#3a4a9a;opacity:0.46"></div><div style="position:absolute;left:56.86px;top:227.79px;width:6.20px;height:1.45px;background:#3a4a9a;opacity:0.48"></div><div style="position:absolute;left:63.87px;top:227.79px;width:0.45px;height:1.45px;background:#3a4a9a;opacity:0.34"></div><div style="position:absolute;left:7.19px;top:229.37px;width:2.60px;height:1.45px;background:#3a4a9a;opacity:0.32"></div><div style="position:absolute;left:10.59px;top:229.37px;width:6.86px;height:1.45px;background:#3a4a9a;opacity:0.41"></div><div style="position:absolute;left:18.25px;top:229.37px;width:6.65px;height:1.45px;background:#3a4a9a;opacity:0.36"></div><div style="position:absolute;left:25.70px;top:229.37px;width:6.33px;height:1.45px;background:#3a4a9a;opacity:0.38"></div><div style="position:absolute;left:32.83px;top:229.37px;width:3.30px;height:1.45px;background:#3a4a9a;opacity:0.45"></div><div style="position:absolute;left:36.93px;top:229.37px;width:6.73px;height:1.45px;background:#3a4a9a;opacity:0.30"></div><div style="position:absolute;left:44.46px;top:229.37px;width:4.98px;height:1.45px;background:#3a4a9a;opacity:0.42"></div><div style="position:absolute;left:50.24px;top:229.37px;width:3.09px;height:1.45px;background:#3a4a9a;opacity:0.36"></div><div style="position:absolute;left:54.13px;top:229.37px;width:2.71px;height:1.45px;background:#3a4a9a;opacity:0.32"></div><div style="position:absolute;left:57.64px;top:229.37px;width:3.27px;height:1.45px;background:#3a4a9a;opacity:0.41"></div><div style="position:absolute;left:61.71px;top:229.37px;width:2.60px;height:1.45px;background:#3a4a9a;opacity:0.32"></div><div style="position:absolute;left:3.5px;top:232.45px;width:100px;height:1.6px;background:#dcc08a"></div><div style="position:absolute;left:4.01px;top:232.55px;width:2.06px;height:1.45px;background:#3a4a9a;opacity:0.35"></div><div style="position:absolute;left:6.87px;top:232.55px;width:5.39px;height:1.45px;background:#3a4a9a;opacity:0.32"></div><div style="position:absolute;left:13.06px;top:232.55px;width:3.56px;height:1.45px;background:#3a4a9a;opacity:0.32"></div><div style="position:absolute;left:17.42px;top:232.55px;width:5.98px;height:1.45px;background:#3a4a9a;opacity:0.40"></div><div style="position:absolute;left:24.20px;top:232.55px;width:1.25px;height:1.45px;background:#3a4a9a;opacity:0.30"></div><div style="position:absolute;left:4.01px;top:234.13px;width:3.98px;height:1.45px;background:#3a9a3a;opacity:0.40"></div><div style="position:absolute;left:8.79px;top:234.13px;width:5.20px;height:1.45px;background:#3a9a3a;opacity:0.30"></div><div style="position:absolute;left:14.78px;top:234.13px;width:2.82px;height:1.45px;background:#3a9a3a;opacity:0.43"></div><div style="position:absolute;left:18.40px;top:234.13px;width:4.05px;height:1.45px;background:#3a9a3a;opacity:0.34"></div><div style="position:absolute;left:23.25px;top:234.13px;width:3.54px;height:1.45px;background:#3a9a3a;opacity:0.49"></div><div style="position:absolute;left:27.59px;top:234.13px;width:3.56px;height:1.45px;background:#3a9a3a;opacity:0.40"></div><div style="position:absolute;left:31.95px;top:234.13px;width:3.79px;height:1.45px;background:#3a9a3a;opacity:0.37"></div><div style="position:absolute;left:36.53px;top:234.13px;width:6.32px;height:1.45px;background:#3a9a3a;opacity:0.50"></div><div style="position:absolute;left:43.66px;top:234.13px;width:0.64px;height:1.45px;background:#3a9a3a;opacity:0.32"></div><div style="position:absolute;left:4.01px;top:235.72px;width:5.64px;height:1.45px;background:#b04ad8;opacity:0.32"></div><div style="position:absolute;left:10.45px;top:235.72px;width:2.03px;height:1.45px;background:#b04ad8;opacity:0.48"></div><div style="position:absolute;left:13.28px;top:235.72px;width:0.39px;height:1.45px;background:#b04ad8;opacity:0.46"></div><div style="position:absolute;left:7.19px;top:237.31px;width:4.03px;height:1.45px;background:#3a4a9a;opacity:0.47"></div><div style="position:absolute;left:12.02px;top:237.31px;width:4.30px;height:1.45px;background:#3a4a9a;opacity:0.32"></div><div style="position:absolute;left:17.13px;top:237.31px;width:2.07px;height:1.45px;background:#3a4a9a;opacity:0.40"></div><div style="position:absolute;left:20.00px;top:237.31px;width:5.20px;height:1.45px;background:#3a4a9a;opacity:0.48"></div><div style="position:absolute;left:26.00px;top:237.31px;width:2.45px;height:1.45px;background:#3a4a9a;opacity:0.42"></div><div style="position:absolute;left:29.25px;top:237.31px;width:3.85px;height:1.45px;background:#3a4a9a;opacity:0.39"></div><div style="position:absolute;left:33.90px;top:237.31px;width:2.73px;height:1.45px;background:#3a4a9a;opacity:0.34"></div><div style="position:absolute;left:37.43px;top:237.31px;width:4.61px;height:1.45px;background:#3a4a9a;opacity:0.48"></div><div style="position:absolute;left:42.84px;top:237.31px;width:2.54px;height:1.45px;background:#3a4a9a;opacity:0.39"></div><div style="position:absolute;left:46.18px;top:237.31px;width:6.02px;height:1.45px;background:#3a4a9a;opacity:0.49"></div><div style="position:absolute;left:53.01px;top:237.31px;width:1.89px;height:1.45px;background:#3a4a9a;opacity:0.31"></div><div style="position:absolute;left:4.01px;top:240.48px;width:2.00px;height:1.45px;background:#b04848;opacity:0.49"></div><div style="position:absolute;left:7.19px;top:242.07px;width:4.41px;height:1.45px;background:#b04848;opacity:0.29"></div><div style="position:absolute;left:12.40px;top:242.07px;width:6.63px;height:1.45px;background:#b04848;opacity:0.37"></div><div style="position:absolute;left:19.83px;top:242.07px;width:6.52px;height:1.45px;background:#b04848;opacity:0.42"></div><div style="position:absolute;left:27.16px;top:242.07px;width:6.12px;height:1.45px;background:#b04848;opacity:0.32"></div><div style="position:absolute;left:34.08px;top:242.07px;width:5.93px;height:1.45px;background:#b04848;opacity:0.33"></div><div style="position:absolute;left:40.81px;top:242.07px;width:4.02px;height:1.45px;background:#b04848;opacity:0.47"></div><div style="position:absolute;left:45.63px;top:242.07px;width:6.15px;height:1.45px;background:#b04848;opacity:0.32"></div><div style="position:absolute;left:52.58px;top:242.07px;width:3.09px;height:1.45px;background:#b04848;opacity:0.37"></div><div style="position:absolute;left:56.47px;top:242.07px;width:4.59px;height:1.45px;background:#b04848;opacity:0.36"></div><div style="position:absolute;left:61.86px;top:242.07px;width:2.62px;height:1.45px;background:#b04848;opacity:0.33"></div><div style="position:absolute;left:7.19px;top:243.66px;width:5.62px;height:1.45px;background:#b04848;opacity:0.48"></div><div style="position:absolute;left:13.61px;top:243.66px;width:2.21px;height:1.45px;background:#b04848;opacity:0.40"></div><div style="position:absolute;left:16.62px;top:243.66px;width:5.79px;height:1.45px;background:#b04848;opacity:0.29"></div><div style="position:absolute;left:23.21px;top:243.66px;width:6.19px;height:1.45px;background:#b04848;opacity:0.31"></div><div style="position:absolute;left:30.20px;top:243.66px;width:5.00px;height:1.45px;background:#b04848;opacity:0.40"></div><div style="position:absolute;left:36.00px;top:243.66px;width:5.14px;height:1.45px;background:#b04848;opacity:0.35"></div><div style="position:absolute;left:41.93px;top:243.66px;width:4.10px;height:1.45px;background:#b04848;opacity:0.41"></div><div style="position:absolute;left:46.83px;top:243.66px;width:4.13px;height:1.45px;background:#b04848;opacity:0.42"></div><div style="position:absolute;left:51.76px;top:243.66px;width:4.23px;height:1.45px;background:#b04848;opacity:0.38"></div><div style="position:absolute;left:56.79px;top:243.66px;width:2.12px;height:1.45px;background:#b04848;opacity:0.42"></div><div style="position:absolute;left:7.19px;top:245.24px;width:4.45px;height:1.45px;background:#b04848;opacity:0.33"></div><div style="position:absolute;left:12.44px;top:245.24px;width:5.82px;height:1.45px;background:#b04848;opacity:0.45"></div><div style="position:absolute;left:19.05px;top:245.24px;width:4.29px;height:1.45px;background:#b04848;opacity:0.32"></div><div style="position:absolute;left:24.15px;top:245.24px;width:4.37px;height:1.45px;background:#b04848;opacity:0.30"></div><div style="position:absolute;left:29.31px;top:245.24px;width:2.64px;height:1.45px;background:#b04848;opacity:0.37"></div><div style="position:absolute;left:32.75px;top:245.24px;width:2.46px;height:1.45px;background:#b04848;opacity:0.38"></div><div style="position:absolute;left:36.01px;top:245.24px;width:4.55px;height:1.45px;background:#b04848;opacity:0.29"></div><div style="position:absolute;left:41.36px;top:245.24px;width:5.18px;height:1.45px;background:#b04848;opacity:0.30"></div><div style="position:absolute;left:47.35px;top:245.24px;width:5.67px;height:1.45px;background:#b04848;opacity:0.45"></div><div style="position:absolute;left:53.81px;top:245.24px;width:4.56px;height:1.45px;background:#b04848;opacity:0.29"></div><div style="position:absolute;left:59.17px;top:245.24px;width:0.43px;height:1.45px;background:#b04848;opacity:0.36"></div><div style="position:absolute;left:7.19px;top:246.83px;width:6.75px;height:1.45px;background:#b04848;opacity:0.31"></div><div style="position:absolute;left:14.74px;top:246.83px;width:6.29px;height:1.45px;background:#b04848;opacity:0.50"></div><div style="position:absolute;left:21.83px;top:246.83px;width:5.66px;height:1.45px;background:#b04848;opacity:0.46"></div><div style="position:absolute;left:28.29px;top:246.83px;width:2.97px;height:1.45px;background:#b04848;opacity:0.50"></div><div style="position:absolute;left:32.06px;top:246.83px;width:4.46px;height:1.45px;background:#b04848;opacity:0.49"></div><div style="position:absolute;left:37.32px;top:246.83px;width:6.58px;height:1.45px;background:#b04848;opacity:0.32"></div><div style="position:absolute;left:44.70px;top:246.83px;width:5.94px;height:1.45px;background:#b04848;opacity:0.48"></div><div style="position:absolute;left:51.44px;top:246.83px;width:2.33px;height:1.45px;background:#b04848;opacity:0.36"></div><div style="position:absolute;left:54.57px;top:246.83px;width:5.78px;height:1.45px;background:#b04848;opacity:0.31"></div><div style="position:absolute;left:61.15px;top:246.83px;width:3.76px;height:1.45px;background:#b04848;opacity:0.34"></div><div style="position:absolute;left:4.01px;top:248.42px;width:2.00px;height:1.45px;background:#b04848;opacity:0.31"></div><div style="position:absolute;left:4.01px;top:251.59px;width:4.51px;height:1.45px;background:#b04848;opacity:0.48"></div><div style="position:absolute;left:9.32px;top:251.59px;width:3.04px;height:1.45px;background:#b04848;opacity:0.34"></div><div style="position:absolute;left:13.16px;top:251.59px;width:4.53px;height:1.45px;background:#b04848;opacity:0.35"></div><div style="position:absolute;left:18.49px;top:251.59px;width:2.18px;height:1.45px;background:#b04848;opacity:0.32"></div><div style="position:absolute;left:21.48px;top:251.59px;width:2.81px;height:1.45px;background:#b04848;opacity:0.49"></div><div style="position:absolute;left:4.01px;top:254.77px;width:5.40px;height:1.45px;background:#3a9a3a;opacity:0.48"></div><div style="position:absolute;left:10.21px;top:254.77px;width:2.84px;height:1.45px;background:#3a9a3a;opacity:0.45"></div><div style="position:absolute;left:13.85px;top:254.77px;width:2.58px;height:1.45px;background:#3a9a3a;opacity:0.40"></div><div style="position:absolute;left:17.23px;top:254.77px;width:5.18px;height:1.45px;background:#3a9a3a;opacity:0.36"></div><div style="position:absolute;left:23.21px;top:254.77px;width:6.36px;height:1.45px;background:#3a9a3a;opacity:0.40"></div><div style="position:absolute;left:30.37px;top:254.77px;width:4.90px;height:1.45px;background:#3a9a3a;opacity:0.47"></div><div style="position:absolute;left:4.01px;top:256.35px;width:2.52px;height:1.45px;background:#3a4a9a;opacity:0.50"></div><div style="position:absolute;left:7.33px;top:256.35px;width:5.15px;height:1.45px;background:#3a4a9a;opacity:0.37"></div><div style="position:absolute;left:13.28px;top:256.35px;width:5.99px;height:1.45px;background:#3a4a9a;opacity:0.34"></div><div style="position:absolute;left:20.07px;top:256.35px;width:6.95px;height:1.45px;background:#3a4a9a;opacity:0.41"></div><div style="position:absolute;left:27.82px;top:256.35px;width:3.80px;height:1.45px;background:#3a4a9a;opacity:0.45"></div><div style="position:absolute;left:32.42px;top:256.35px;width:4.21px;height:1.45px;background:#3a4a9a;opacity:0.32"></div><div style="position:absolute;left:37.43px;top:256.35px;width:0.38px;height:1.45px;background:#3a4a9a;opacity:0.29"></div><div style="position:absolute;left:4.01px;top:259.53px;width:6.10px;height:1.45px;background:#3a9a3a;opacity:0.34"></div><div style="position:absolute;left:10.91px;top:259.53px;width:3.94px;height:1.45px;background:#3a9a3a;opacity:0.50"></div><div style="position:absolute;left:4.01px;top:261.11px;width:4.93px;height:1.45px;background:#3a9a3a;opacity:0.43"></div><div style="position:absolute;left:9.74px;top:261.11px;width:3.56px;height:1.45px;background:#3a9a3a;opacity:0.28"></div><div style="position:absolute;left:14.10px;top:261.11px;width:2.17px;height:1.45px;background:#3a9a3a;opacity:0.31"></div><div style="position:absolute;left:17.07px;top:261.11px;width:1.31px;height:1.45px;background:#3a9a3a;opacity:0.38"></div><div style="position:absolute;left:4.01px;top:262.70px;width:4.56px;height:1.45px;background:#3a9a3a;opacity:0.48"></div><div style="position:absolute;left:9.37px;top:262.70px;width:2.66px;height:1.45px;background:#3a9a3a;opacity:0.33"></div><div style="position:absolute;left:12.83px;top:262.70px;width:5.27px;height:1.45px;background:#3a9a3a;opacity:0.28"></div><div style="position:absolute;left:18.90px;top:262.70px;width:2.01px;height:1.45px;background:#3a9a3a;opacity:0.36"></div><div style="position:absolute;left:21.71px;top:262.70px;width:2.53px;height:1.45px;background:#3a9a3a;opacity:0.36"></div><div style="position:absolute;left:25.04px;top:262.70px;width:3.12px;height:1.45px;background:#3a9a3a;opacity:0.41"></div><div style="position:absolute;left:28.96px;top:262.70px;width:4.14px;height:1.45px;background:#3a9a3a;opacity:0.32"></div><div style="position:absolute;left:4.01px;top:265.88px;width:5.12px;height:1.45px;background:#3a9a3a;opacity:0.38"></div><div style="position:absolute;left:9.93px;top:265.88px;width:2.67px;height:1.45px;background:#3a9a3a;opacity:0.49"></div><div style="position:absolute;left:13.40px;top:265.88px;width:3.22px;height:1.45px;background:#3a9a3a;opacity:0.31"></div><div style="position:absolute;left:17.42px;top:265.88px;width:2.48px;height:1.45px;background:#3a9a3a;opacity:0.42"></div><div style="position:absolute;left:20.70px;top:265.88px;width:6.36px;height:1.45px;background:#3a9a3a;opacity:0.45"></div><div style="position:absolute;left:4.01px;top:267.46px;width:4.01px;height:1.45px;background:#b04ad8;opacity:0.34"></div><div style="position:absolute;left:8.82px;top:267.46px;width:2.06px;height:1.45px;background:#b04ad8;opacity:0.42"></div><div style="position:absolute;left:11.68px;top:267.46px;width:4.81px;height:1.45px;background:#b04ad8;opacity:0.36"></div><div style="position:absolute;left:17.29px;top:267.46px;width:5.23px;height:1.45px;background:#b04ad8;opacity:0.38"></div><div style="position:absolute;left:23.32px;top:267.46px;width:6.69px;height:1.45px;background:#b04ad8;opacity:0.44"></div><div style="position:absolute;left:30.80px;top:267.46px;width:2.89px;height:1.45px;background:#b04ad8;opacity:0.48"></div><div style="position:absolute;left:7.19px;top:269.05px;width:2.22px;height:1.45px;background:#b04848;opacity:0.40"></div><div style="position:absolute;left:10.21px;top:269.05px;width:4.03px;height:1.45px;background:#b04848;opacity:0.33"></div><div style="position:absolute;left:15.04px;top:269.05px;width:2.29px;height:1.45px;background:#b04848;opacity:0.45"></div><div style="position:absolute;left:18.13px;top:269.05px;width:2.06px;height:1.45px;background:#b04848;opacity:0.40"></div><div style="position:absolute;left:20.99px;top:269.05px;width:6.70px;height:1.45px;background:#b04848;opacity:0.31"></div><div style="position:absolute;left:28.50px;top:269.05px;width:3.00px;height:1.45px;background:#b04848;opacity:0.41"></div><div style="position:absolute;left:32.30px;top:269.05px;width:4.53px;height:1.45px;background:#b04848;opacity:0.42"></div><div style="position:absolute;left:37.63px;top:269.05px;width:4.31px;height:1.45px;background:#b04848;opacity:0.32"></div><div style="position:absolute;left:7.19px;top:270.64px;width:3.55px;height:1.45px;background:#3a9a3a;opacity:0.35"></div><div style="position:absolute;left:11.54px;top:270.64px;width:2.24px;height:1.45px;background:#3a9a3a;opacity:0.48"></div><div style="position:absolute;left:14.58px;top:270.64px;width:5.91px;height:1.45px;background:#3a9a3a;opacity:0.44"></div><div style="position:absolute;left:21.29px;top:270.64px;width:2.03px;height:1.45px;background:#3a9a3a;opacity:0.47"></div><div style="position:absolute;left:24.13px;top:270.64px;width:5.73px;height:1.45px;background:#3a9a3a;opacity:0.38"></div><div style="position:absolute;left:30.65px;top:270.64px;width:5.71px;height:1.45px;background:#3a9a3a;opacity:0.38"></div><div style="position:absolute;left:37.16px;top:270.64px;width:3.13px;height:1.45px;background:#3a9a3a;opacity:0.30"></div><div style="position:absolute;left:41.09px;top:270.64px;width:3.16px;height:1.45px;background:#3a9a3a;opacity:0.29"></div><div style="position:absolute;left:45.05px;top:270.64px;width:3.68px;height:1.45px;background:#3a9a3a;opacity:0.44"></div><div style="position:absolute;left:49.53px;top:270.64px;width:5.48px;height:1.45px;background:#3a9a3a;opacity:0.47"></div><div style="position:absolute;left:55.80px;top:270.64px;width:5.56px;height:1.45px;background:#3a9a3a;opacity:0.34"></div><div style="position:absolute;left:62.16px;top:270.64px;width:4.77px;height:1.45px;background:#3a9a3a;opacity:0.38"></div><div style="position:absolute;left:67.73px;top:270.64px;width:5.94px;height:1.45px;background:#3a9a3a;opacity:0.40"></div><div style="position:absolute;left:74.47px;top:270.64px;width:3.33px;height:1.45px;background:#3a9a3a;opacity:0.42"></div><div style="position:absolute;left:78.60px;top:270.64px;width:6.83px;height:1.45px;background:#3a9a3a;opacity:0.33"></div><div style="position:absolute;left:86.23px;top:270.64px;width:6.40px;height:1.45px;background:#3a9a3a;opacity:0.28"></div><div style="position:absolute;left:93.43px;top:270.64px;width:2.69px;height:1.45px;background:#3a9a3a;opacity:0.33"></div><div style="position:absolute;left:7.19px;top:273.81px;width:5.72px;height:1.45px;background:#3a9a3a;opacity:0.49"></div><div style="position:absolute;left:13.71px;top:273.81px;width:5.73px;height:1.45px;background:#3a9a3a;opacity:0.35"></div><div style="position:absolute;left:20.24px;top:273.81px;width:1.67px;height:1.45px;background:#3a9a3a;opacity:0.35"></div><div style="position:absolute;left:7.19px;top:275.40px;width:3.20px;height:1.45px;background:#b04ad8;opacity:0.48"></div><div style="position:absolute;left:11.19px;top:275.40px;width:3.07px;height:1.45px;background:#b04ad8;opacity:0.43"></div><div style="position:absolute;left:10.13px;top:276.98px;width:5.33px;height:1.45px;background:#b04ad8;opacity:0.50"></div><div style="position:absolute;left:16.26px;top:276.98px;width:0.94px;height:1.45px;background:#b04ad8;opacity:0.46"></div><div style="position:absolute;left:13.08px;top:278.57px;width:5.49px;height:1.45px;background:#3a4a9a;opacity:0.47"></div><div style="position:absolute;left:19.37px;top:278.57px;width:4.19px;height:1.45px;background:#3a4a9a;opacity:0.44"></div><div style="position:absolute;left:24.35px;top:278.57px;width:4.85px;height:1.45px;background:#3a4a9a;opacity:0.35"></div><div style="position:absolute;left:30.00px;top:278.57px;width:0.15px;height:1.45px;background:#3a4a9a;opacity:0.42"></div><div style="position:absolute;left:16.02px;top:280.16px;width:2.39px;height:1.45px;background:#3a9a3a;opacity:0.48"></div><div style="position:absolute;left:19.21px;top:280.16px;width:2.72px;height:1.45px;background:#3a9a3a;opacity:0.29"></div><div style="position:absolute;left:22.74px;top:280.16px;width:2.53px;height:1.45px;background:#3a9a3a;opacity:0.48"></div><div style="position:absolute;left:26.07px;top:280.16px;width:3.72px;height:1.45px;background:#3a9a3a;opacity:0.31"></div><div style="position:absolute;left:30.59px;top:280.16px;width:2.14px;height:1.45px;background:#3a9a3a;opacity:0.29"></div><div style="position:absolute;left:33.54px;top:280.16px;width:5.46px;height:1.45px;background:#3a9a3a;opacity:0.42"></div><div style="position:absolute;left:39.80px;top:280.16px;width:5.49px;height:1.45px;background:#3a9a3a;opacity:0.44"></div><div style="position:absolute;left:46.09px;top:280.16px;width:2.33px;height:1.45px;background:#3a9a3a;opacity:0.41"></div><div style="position:absolute;left:49.21px;top:280.16px;width:3.82px;height:1.45px;background:#3a9a3a;opacity:0.46"></div><div style="position:absolute;left:53.83px;top:280.16px;width:2.24px;height:1.45px;background:#3a9a3a;opacity:0.48"></div><div style="position:absolute;left:16.02px;top:281.75px;width:2.33px;height:1.45px;background:#3a4a9a;opacity:0.47"></div><div style="position:absolute;left:19.15px;top:281.75px;width:6.57px;height:1.45px;background:#3a4a9a;opacity:0.49"></div><div style="position:absolute;left:26.53px;top:281.75px;width:2.54px;height:1.45px;background:#3a4a9a;opacity:0.33"></div><div style="position:absolute;left:29.86px;top:281.75px;width:2.56px;height:1.45px;background:#3a4a9a;opacity:0.29"></div><div style="position:absolute;left:33.22px;top:281.75px;width:6.24px;height:1.45px;background:#3a4a9a;opacity:0.46"></div><div style="position:absolute;left:40.26px;top:281.75px;width:0.50px;height:1.45px;background:#3a4a9a;opacity:0.46"></div><div style="position:absolute;left:3.5px;top:283.13px;width:100px;height:1.7px;background:#dce8f7"></div><div style="position:absolute;left:16.02px;top:283.33px;width:5.16px;height:1.45px;background:#3a4a9a;opacity:0.34"></div><div style="position:absolute;left:21.98px;top:283.33px;width:2.50px;height:1.45px;background:#3a4a9a;opacity:0.30"></div><div style="position:absolute;left:25.28px;top:283.33px;width:5.79px;height:1.45px;background:#3a4a9a;opacity:0.33"></div><div style="position:absolute;left:31.87px;top:283.33px;width:3.60px;height:1.45px;background:#3a4a9a;opacity:0.37"></div><div style="position:absolute;left:36.26px;top:283.33px;width:2.10px;height:1.45px;background:#3a4a9a;opacity:0.34"></div><div style="position:absolute;left:39.17px;top:283.33px;width:1.59px;height:1.45px;background:#3a4a9a;opacity:0.44"></div><div style="position:absolute;left:16.02px;top:284.92px;width:3.53px;height:1.45px;background:#3a4a9a;opacity:0.35"></div><div style="position:absolute;left:18.97px;top:286.51px;width:6.82px;height:1.45px;background:#b04848;opacity:0.39"></div><div style="position:absolute;left:26.59px;top:286.51px;width:5.93px;height:1.45px;background:#b04848;opacity:0.42"></div><div style="position:absolute;left:18.97px;top:288.09px;width:2.15px;height:1.45px;background:#b04848;opacity:0.37"></div><div style="position:absolute;left:21.92px;top:288.09px;width:4.18px;height:1.45px;background:#b04848;opacity:0.45"></div><div style="position:absolute;left:26.91px;top:288.09px;width:3.73px;height:1.45px;background:#b04848;opacity:0.44"></div><div style="position:absolute;left:18.97px;top:289.68px;width:4.69px;height:1.45px;background:#b04848;opacity:0.33"></div><div style="position:absolute;left:24.46px;top:289.68px;width:6.31px;height:1.45px;background:#b04848;opacity:0.30"></div><div style="position:absolute;left:31.57px;top:289.68px;width:5.07px;height:1.45px;background:#b04848;opacity:0.32"></div><div style="position:absolute;left:23.09px;top:291.27px;width:2.01px;height:1.45px;background:#b04848;opacity:0.32"></div><div style="position:absolute;left:25.90px;top:291.27px;width:5.81px;height:1.45px;background:#b04848;opacity:0.50"></div><div style="position:absolute;left:32.51px;top:291.27px;width:2.02px;height:1.45px;background:#b04848;opacity:0.39"></div><div style="position:absolute;left:35.33px;top:291.27px;width:2.48px;height:1.45px;background:#b04848;opacity:0.46"></div><div style="position:absolute;left:16.02px;top:292.85px;width:2.92px;height:1.45px;background:#3a9a3a;opacity:0.39"></div><div style="position:absolute;left:19.75px;top:292.85px;width:3.74px;height:1.45px;background:#3a9a3a;opacity:0.46"></div><div style="position:absolute;left:24.28px;top:292.85px;width:3.30px;height:1.45px;background:#3a9a3a;opacity:0.49"></div><div style="position:absolute;left:28.38px;top:292.85px;width:3.42px;height:1.45px;background:#3a9a3a;opacity:0.33"></div><div style="position:absolute;left:32.60px;top:292.85px;width:5.50px;height:1.45px;background:#3a9a3a;opacity:0.39"></div><div style="position:absolute;left:38.90px;top:292.85px;width:2.55px;height:1.45px;background:#3a9a3a;opacity:0.42"></div><div style="position:absolute;left:42.25px;top:292.85px;width:2.04px;height:1.45px;background:#3a9a3a;opacity:0.45"></div><div style="position:absolute;left:7.19px;top:296.03px;width:5.49px;height:1.45px;background:#3a9a3a;opacity:0.45"></div><div style="position:absolute;left:13.48px;top:296.03px;width:5.14px;height:1.45px;background:#3a9a3a;opacity:0.36"></div><div style="position:absolute;left:19.42px;top:296.03px;width:4.01px;height:1.45px;background:#3a9a3a;opacity:0.37"></div><div style="position:absolute;left:24.22px;top:296.03px;width:6.45px;height:1.45px;background:#3a9a3a;opacity:0.30"></div><div style="position:absolute;left:31.47px;top:296.03px;width:6.44px;height:1.45px;background:#3a9a3a;opacity:0.29"></div><div style="position:absolute;left:38.72px;top:296.03px;width:3.03px;height:1.45px;background:#3a9a3a;opacity:0.34"></div><div style="position:absolute;left:42.55px;top:296.03px;width:5.28px;height:1.45px;background:#3a9a3a;opacity:0.39"></div><div style="position:absolute;left:7.19px;top:297.62px;width:3.90px;height:1.45px;background:#3a4a9a;opacity:0.47"></div><div style="position:absolute;left:11.89px;top:297.62px;width:3.17px;height:1.45px;background:#3a4a9a;opacity:0.38"></div><div style="position:absolute;left:15.85px;top:297.62px;width:4.66px;height:1.45px;background:#3a4a9a;opacity:0.45"></div><div style="position:absolute;left:21.31px;top:297.62px;width:5.76px;height:1.45px;background:#3a4a9a;opacity:0.42"></div><div style="position:absolute;left:27.88px;top:297.62px;width:3.74px;height:1.45px;background:#3a4a9a;opacity:0.35"></div><div style="position:absolute;left:32.42px;top:297.62px;width:2.78px;height:1.45px;background:#3a4a9a;opacity:0.47"></div><div style="position:absolute;left:36.00px;top:297.62px;width:5.31px;height:1.45px;background:#3a4a9a;opacity:0.44"></div><div style="position:absolute;left:42.11px;top:297.62px;width:2.85px;height:1.45px;background:#3a4a9a;opacity:0.38"></div><div style="position:absolute;left:45.75px;top:297.62px;width:5.87px;height:1.45px;background:#3a4a9a;opacity:0.41"></div><div style="position:absolute;left:52.42px;top:297.62px;width:2.63px;height:1.45px;background:#3a4a9a;opacity:0.38"></div><div style="position:absolute;left:55.85px;top:297.62px;width:4.93px;height:1.45px;background:#3a4a9a;opacity:0.33"></div><div style="position:absolute;left:7.19px;top:300.79px;width:2.96px;height:1.45px;background:#3a4a9a;opacity:0.35"></div><div style="position:absolute;left:10.95px;top:300.79px;width:5.52px;height:1.45px;background:#3a4a9a;opacity:0.47"></div><div style="position:absolute;left:17.26px;top:300.79px;width:2.29px;height:1.45px;background:#3a4a9a;opacity:0.31"></div><div style="position:absolute;left:13.08px;top:302.38px;width:3.24px;height:1.45px;background:#b04848;opacity:0.35"></div><div style="position:absolute;left:17.12px;top:302.38px;width:4.61px;height:1.45px;background:#b04848;opacity:0.32"></div><div style="position:absolute;left:22.53px;top:302.38px;width:3.64px;height:1.45px;background:#b04848;opacity:0.32"></div><div style="position:absolute;left:26.97px;top:302.38px;width:6.88px;height:1.45px;background:#b04848;opacity:0.44"></div><div style="position:absolute;left:34.64px;top:302.38px;width:2.51px;height:1.45px;background:#b04848;opacity:0.49"></div><div style="position:absolute;left:37.95px;top:302.38px;width:2.51px;height:1.45px;background:#b04848;opacity:0.36"></div><div style="position:absolute;left:41.26px;top:302.38px;width:6.92px;height:1.45px;background:#b04848;opacity:0.45"></div><div style="position:absolute;left:48.98px;top:302.38px;width:5.67px;height:1.45px;background:#b04848;opacity:0.38"></div><div style="position:absolute;left:55.45px;top:302.38px;width:2.98px;height:1.45px;background:#b04848;opacity:0.42"></div><div style="position:absolute;left:59.23px;top:302.38px;width:2.53px;height:1.45px;background:#b04848;opacity:0.33"></div><div style="position:absolute;left:62.56px;top:302.38px;width:3.94px;height:1.45px;background:#b04848;opacity:0.29"></div><div style="position:absolute;left:67.30px;top:302.38px;width:4.00px;height:1.45px;background:#b04848;opacity:0.45"></div><div style="position:absolute;left:72.10px;top:302.38px;width:5.47px;height:1.45px;background:#b04848;opacity:0.39"></div><div style="position:absolute;left:78.37px;top:302.38px;width:3.62px;height:1.45px;background:#b04848;opacity:0.38"></div><div style="position:absolute;left:13.08px;top:303.96px;width:2.71px;height:1.45px;background:#b04848;opacity:0.41"></div><div style="position:absolute;left:16.59px;top:303.96px;width:4.02px;height:1.45px;background:#b04848;opacity:0.44"></div><div style="position:absolute;left:21.41px;top:303.96px;width:6.39px;height:1.45px;background:#b04848;opacity:0.37"></div><div style="position:absolute;left:13.08px;top:305.55px;width:4.87px;height:1.45px;background:#b04848;opacity:0.44"></div><div style="position:absolute;left:18.75px;top:305.55px;width:4.11px;height:1.45px;background:#b04848;opacity:0.33"></div><div style="position:absolute;left:23.65px;top:305.55px;width:4.15px;height:1.45px;background:#b04848;opacity:0.47"></div><div style="position:absolute;left:10.13px;top:307.14px;width:2.36px;height:1.45px;background:#b04848;opacity:0.43"></div><div style="position:absolute;left:7.19px;top:310.31px;width:6.26px;height:1.45px;background:#b04ad8;opacity:0.43"></div><div style="position:absolute;left:14.25px;top:310.31px;width:5.21px;height:1.45px;background:#b04ad8;opacity:0.38"></div><div style="position:absolute;left:10.13px;top:311.90px;width:3.57px;height:1.45px;background:#3a4a9a;opacity:0.42"></div><div style="position:absolute;left:14.50px;top:311.90px;width:2.49px;height:1.45px;background:#3a4a9a;opacity:0.37"></div><div style="position:absolute;left:17.79px;top:311.90px;width:5.91px;height:1.45px;background:#3a4a9a;opacity:0.44"></div><div style="position:absolute;left:24.50px;top:311.90px;width:5.15px;height:1.45px;background:#3a4a9a;opacity:0.34"></div><div style="position:absolute;left:30.45px;top:311.90px;width:4.12px;height:1.45px;background:#3a4a9a;opacity:0.38"></div><div style="position:absolute;left:35.37px;top:311.90px;width:5.11px;height:1.45px;background:#3a4a9a;opacity:0.37"></div><div style="position:absolute;left:41.27px;top:311.90px;width:5.38px;height:1.45px;background:#3a4a9a;opacity:0.48"></div><div style="position:absolute;left:47.45px;top:311.90px;width:2.92px;height:1.45px;background:#3a4a9a;opacity:0.42"></div><div style="position:absolute;left:51.17px;top:311.90px;width:5.89px;height:1.45px;background:#3a4a9a;opacity:0.37"></div><div style="position:absolute;left:57.86px;top:311.90px;width:4.45px;height:1.45px;background:#3a4a9a;opacity:0.49"></div><div style="position:absolute;left:63.11px;top:311.90px;width:2.19px;height:1.45px;background:#3a4a9a;opacity:0.40"></div><div style="position:absolute;left:66.10px;top:311.90px;width:2.80px;height:1.45px;background:#3a4a9a;opacity:0.45"></div><div style="position:absolute;left:69.70px;top:311.90px;width:6.70px;height:1.45px;background:#3a4a9a;opacity:0.39"></div><div style="position:absolute;left:77.20px;top:311.90px;width:1.25px;height:1.45px;background:#3a4a9a;opacity:0.41"></div><div style="position:absolute;left:10.13px;top:313.49px;width:4.71px;height:1.45px;background:#3a4a9a;opacity:0.44"></div><div style="position:absolute;left:15.64px;top:313.49px;width:4.56px;height:1.45px;background:#3a4a9a;opacity:0.42"></div><div style="position:absolute;left:21.00px;top:313.49px;width:6.14px;height:1.45px;background:#3a4a9a;opacity:0.39"></div><div style="position:absolute;left:27.95px;top:313.49px;width:4.05px;height:1.45px;background:#3a4a9a;opacity:0.49"></div><div style="position:absolute;left:32.80px;top:313.49px;width:3.05px;height:1.45px;background:#3a4a9a;opacity:0.43"></div><div style="position:absolute;left:36.65px;top:313.49px;width:3.96px;height:1.45px;background:#3a4a9a;opacity:0.45"></div><div style="position:absolute;left:41.41px;top:313.49px;width:2.61px;height:1.45px;background:#3a4a9a;opacity:0.50"></div><div style="position:absolute;left:44.82px;top:313.49px;width:3.78px;height:1.45px;background:#3a4a9a;opacity:0.29"></div><div style="position:absolute;left:49.40px;top:313.49px;width:3.37px;height:1.45px;background:#3a4a9a;opacity:0.37"></div><div style="position:absolute;left:53.57px;top:313.49px;width:2.07px;height:1.45px;background:#3a4a9a;opacity:0.37"></div><div style="position:absolute;left:56.44px;top:313.49px;width:4.10px;height:1.45px;background:#3a4a9a;opacity:0.43"></div><div style="position:absolute;left:61.34px;top:313.49px;width:3.76px;height:1.45px;background:#3a4a9a;opacity:0.34"></div><div style="position:absolute;left:65.90px;top:313.49px;width:3.12px;height:1.45px;background:#3a4a9a;opacity:0.44"></div><div style="position:absolute;left:69.82px;top:313.49px;width:1.56px;height:1.45px;background:#3a4a9a;opacity:0.40"></div><div style="position:absolute;left:10.13px;top:315.07px;width:3.09px;height:1.45px;background:#3a4a9a;opacity:0.46"></div><div style="position:absolute;left:14.03px;top:315.07px;width:3.96px;height:1.45px;background:#3a4a9a;opacity:0.33"></div><div style="position:absolute;left:18.79px;top:315.07px;width:2.65px;height:1.45px;background:#3a4a9a;opacity:0.45"></div><div style="position:absolute;left:22.24px;top:315.07px;width:6.05px;height:1.45px;background:#3a4a9a;opacity:0.42"></div><div style="position:absolute;left:29.08px;top:315.07px;width:4.35px;height:1.45px;background:#3a4a9a;opacity:0.40"></div><div style="position:absolute;left:34.23px;top:315.07px;width:3.13px;height:1.45px;background:#3a4a9a;opacity:0.49"></div><div style="position:absolute;left:38.16px;top:315.07px;width:3.77px;height:1.45px;background:#3a4a9a;opacity:0.42"></div><div style="position:absolute;left:42.72px;top:315.07px;width:6.09px;height:1.45px;background:#3a4a9a;opacity:0.46"></div><div style="position:absolute;left:49.62px;top:315.07px;width:4.34px;height:1.45px;background:#3a4a9a;opacity:0.34"></div><div style="position:absolute;left:54.76px;top:315.07px;width:4.74px;height:1.45px;background:#3a4a9a;opacity:0.31"></div><div style="position:absolute;left:60.30px;top:315.07px;width:6.17px;height:1.45px;background:#3a4a9a;opacity:0.36"></div><div style="position:absolute;left:67.27px;top:315.07px;width:6.25px;height:1.45px;background:#3a4a9a;opacity:0.34"></div><div style="position:absolute;left:74.32px;top:315.07px;width:0.59px;height:1.45px;background:#3a4a9a;opacity:0.34"></div><div style="position:absolute;left:10.13px;top:318.25px;width:4.13px;height:1.45px;background:#3a4a9a;opacity:0.32"></div><div style="position:absolute;left:15.06px;top:318.25px;width:2.01px;height:1.45px;background:#3a4a9a;opacity:0.44"></div><div style="position:absolute;left:17.88px;top:318.25px;width:3.41px;height:1.45px;background:#3a4a9a;opacity:0.33"></div><div style="position:absolute;left:22.08px;top:318.25px;width:3.51px;height:1.45px;background:#3a4a9a;opacity:0.39"></div><div style="position:absolute;left:26.39px;top:318.25px;width:4.14px;height:1.45px;background:#3a4a9a;opacity:0.42"></div><div style="position:absolute;left:31.34px;top:318.25px;width:5.30px;height:1.45px;background:#3a4a9a;opacity:0.36"></div><div style="position:absolute;left:37.43px;top:318.25px;width:6.64px;height:1.45px;background:#3a4a9a;opacity:0.47"></div><div style="position:absolute;left:44.88px;top:318.25px;width:2.29px;height:1.45px;background:#3a4a9a;opacity:0.46"></div><div style="position:absolute;left:47.96px;top:318.25px;width:6.53px;height:1.45px;background:#3a4a9a;opacity:0.45"></div><div style="position:absolute;left:55.29px;top:318.25px;width:2.70px;height:1.45px;background:#3a4a9a;opacity:0.46"></div><div style="position:absolute;left:58.79px;top:318.25px;width:3.76px;height:1.45px;background:#3a4a9a;opacity:0.28"></div><div style="position:absolute;left:10.13px;top:321.42px;width:2.06px;height:1.45px;background:#3a4a9a;opacity:0.49"></div><div style="position:absolute;left:12.99px;top:321.42px;width:0.68px;height:1.45px;background:#3a4a9a;opacity:0.34"></div><div style="position:absolute;left:16.02px;top:324.59px;width:2.51px;height:1.45px;background:#b04848;opacity:0.31"></div><div style="position:absolute;left:19.33px;top:324.59px;width:3.17px;height:1.45px;background:#b04848;opacity:0.45"></div><div style="position:absolute;left:23.30px;top:324.59px;width:3.73px;height:1.45px;background:#b04848;opacity:0.31"></div><div style="position:absolute;left:27.83px;top:324.59px;width:2.33px;height:1.45px;background:#b04848;opacity:0.45"></div><div style="position:absolute;left:16.02px;top:326.18px;width:2.84px;height:1.45px;background:#b04848;opacity:0.48"></div><div style="position:absolute;left:19.66px;top:326.18px;width:5.04px;height:1.45px;background:#b04848;opacity:0.45"></div><div style="position:absolute;left:25.50px;top:326.18px;width:3.48px;height:1.45px;background:#b04848;opacity:0.48"></div><div style="position:absolute;left:16.02px;top:327.77px;width:5.94px;height:1.45px;background:#b04848;opacity:0.46"></div><div style="position:absolute;left:22.76px;top:327.77px;width:2.68px;height:1.45px;background:#b04848;opacity:0.43"></div><div style="position:absolute;left:23.09px;top:329.36px;width:4.65px;height:1.45px;background:#b04848;opacity:0.44"></div><div style="position:absolute;left:28.54px;top:329.36px;width:4.19px;height:1.45px;background:#b04848;opacity:0.47"></div><div style="position:absolute;left:33.54px;top:329.36px;width:4.78px;height:1.45px;background:#b04848;opacity:0.34"></div><div style="position:absolute;left:18.97px;top:330.94px;width:1.77px;height:1.45px;background:#555555;opacity:0.31"></div><div style="position:absolute;left:13.44px;top:332.53px;width:1.35px;height:1.45px;background:#555555;opacity:0.29"></div><div style="position:absolute;left:10.07px;top:335.70px;width:4.34px;height:1.45px;background:#3a9a3a;opacity:0.31"></div><div style="position:absolute;left:15.21px;top:335.70px;width:4.46px;height:1.45px;background:#3a9a3a;opacity:0.39"></div><div style="position:absolute;left:20.47px;top:335.70px;width:4.70px;height:1.45px;background:#3a9a3a;opacity:0.47"></div><div style="position:absolute;left:25.96px;top:335.70px;width:2.03px;height:1.45px;background:#3a9a3a;opacity:0.46"></div><div style="position:absolute;left:28.80px;top:335.70px;width:4.34px;height:1.45px;background:#3a9a3a;opacity:0.40"></div><div style="position:absolute;left:33.94px;top:335.70px;width:5.33px;height:1.45px;background:#3a9a3a;opacity:0.46"></div><div style="position:absolute;left:40.06px;top:335.70px;width:2.36px;height:1.45px;background:#3a9a3a;opacity:0.37"></div><div style="position:absolute;left:10.07px;top:337.29px;width:6.80px;height:1.45px;background:#3a4a9a;opacity:0.30"></div><div style="position:absolute;left:17.68px;top:337.29px;width:5.19px;height:1.45px;background:#3a4a9a;opacity:0.42"></div><div style="position:absolute;left:23.66px;top:337.29px;width:2.14px;height:1.45px;background:#3a4a9a;opacity:0.41"></div><div style="position:absolute;left:26.61px;top:337.29px;width:5.41px;height:1.45px;background:#3a4a9a;opacity:0.48"></div><div style="position:absolute;left:32.82px;top:337.29px;width:3.65px;height:1.45px;background:#3a4a9a;opacity:0.50"></div><div style="position:absolute;left:37.27px;top:337.29px;width:3.13px;height:1.45px;background:#3a4a9a;opacity:0.39"></div><div style="position:absolute;left:6.70px;top:340.46px;width:6.49px;height:1.45px;background:#3a9a3a;opacity:0.29"></div><div style="position:absolute;left:13.99px;top:340.46px;width:5.59px;height:1.45px;background:#3a9a3a;opacity:0.42"></div><div style="position:absolute;left:20.38px;top:340.46px;width:3.69px;height:1.45px;background:#3a9a3a;opacity:0.47"></div><div style="position:absolute;left:24.88px;top:340.46px;width:3.83px;height:1.45px;background:#3a9a3a;opacity:0.38"></div><div style="position:absolute;left:29.51px;top:340.46px;width:4.63px;height:1.45px;background:#3a9a3a;opacity:0.45"></div><div style="position:absolute;left:34.94px;top:340.46px;width:3.05px;height:1.45px;background:#3a9a3a;opacity:0.38"></div><div style="position:absolute;left:38.79px;top:340.46px;width:4.11px;height:1.45px;background:#3a9a3a;opacity:0.40"></div><div style="position:absolute;left:43.70px;top:340.46px;width:0.74px;height:1.45px;background:#3a9a3a;opacity:0.34"></div><div style="position:absolute;left:6.70px;top:342.05px;width:6.14px;height:1.45px;background:#b04ad8;opacity:0.37"></div><div style="position:absolute;left:13.64px;top:342.05px;width:4.52px;height:1.45px;background:#b04ad8;opacity:0.34"></div><div style="position:absolute;left:18.96px;top:342.05px;width:4.53px;height:1.45px;background:#b04ad8;opacity:0.49"></div><div style="position:absolute;left:24.29px;top:342.05px;width:5.27px;height:1.45px;background:#b04ad8;opacity:0.45"></div><div style="position:absolute;left:30.37px;top:342.05px;width:3.65px;height:1.45px;background:#b04ad8;opacity:0.35"></div><div style="position:absolute;left:34.82px;top:342.05px;width:3.50px;height:1.45px;background:#b04ad8;opacity:0.41"></div><div style="position:absolute;left:39.12px;top:342.05px;width:5.17px;height:1.45px;background:#b04ad8;opacity:0.45"></div><div style="position:absolute;left:45.09px;top:342.05px;width:2.20px;height:1.45px;background:#b04ad8;opacity:0.44"></div><div style="position:absolute;left:48.09px;top:342.05px;width:6.43px;height:1.45px;background:#b04ad8;opacity:0.40"></div><div style="position:absolute;left:55.32px;top:342.05px;width:1.92px;height:1.45px;background:#b04ad8;opacity:0.35"></div><div style="position:absolute;left:10.07px;top:343.64px;width:2.03px;height:1.45px;background:#3a4a9a;opacity:0.32"></div><div style="position:absolute;left:12.91px;top:343.64px;width:6.61px;height:1.45px;background:#3a4a9a;opacity:0.41"></div><div style="position:absolute;left:20.31px;top:343.64px;width:5.29px;height:1.45px;background:#3a4a9a;opacity:0.45"></div><div style="position:absolute;left:26.40px;top:343.64px;width:6.55px;height:1.45px;background:#3a4a9a;opacity:0.41"></div><div style="position:absolute;left:33.75px;top:343.64px;width:5.08px;height:1.45px;background:#3a4a9a;opacity:0.42"></div><div style="position:absolute;left:39.64px;top:343.64px;width:5.48px;height:1.45px;background:#3a4a9a;opacity:0.41"></div><div style="position:absolute;left:45.92px;top:343.64px;width:2.57px;height:1.45px;background:#3a4a9a;opacity:0.33"></div><div style="position:absolute;left:6.70px;top:346.81px;width:5.34px;height:1.45px;background:#3a9a3a;opacity:0.38"></div><div style="position:absolute;left:12.84px;top:346.81px;width:5.81px;height:1.45px;background:#3a9a3a;opacity:0.30"></div><div style="position:absolute;left:19.45px;top:346.81px;width:1.40px;height:1.45px;background:#3a9a3a;opacity:0.29"></div><div style="position:absolute;left:6.70px;top:348.40px;width:5.87px;height:1.45px;background:#b04ad8;opacity:0.48"></div><div style="position:absolute;left:13.38px;top:348.40px;width:5.28px;height:1.45px;background:#b04ad8;opacity:0.36"></div><div style="position:absolute;left:19.46px;top:348.40px;width:6.11px;height:1.45px;background:#b04ad8;opacity:0.45"></div><div style="position:absolute;left:26.37px;top:348.40px;width:4.81px;height:1.45px;background:#b04ad8;opacity:0.34"></div><div style="position:absolute;left:31.98px;top:348.40px;width:3.51px;height:1.45px;background:#b04ad8;opacity:0.37"></div><div style="position:absolute;left:36.29px;top:348.40px;width:3.59px;height:1.45px;background:#b04ad8;opacity:0.37"></div><div style="position:absolute;left:40.68px;top:348.40px;width:5.21px;height:1.45px;background:#b04ad8;opacity:0.49"></div><div style="position:absolute;left:10.07px;top:349.99px;width:2.27px;height:1.45px;background:#3a4a9a;opacity:0.40"></div><div style="position:absolute;left:13.15px;top:349.99px;width:2.20px;height:1.45px;background:#3a4a9a;opacity:0.31"></div><div style="position:absolute;left:16.14px;top:349.99px;width:6.05px;height:1.45px;background:#3a4a9a;opacity:0.41"></div><div style="position:absolute;left:23.00px;top:349.99px;width:6.59px;height:1.45px;background:#3a4a9a;opacity:0.38"></div><div style="position:absolute;left:30.39px;top:349.99px;width:1.92px;height:1.45px;background:#3a4a9a;opacity:0.37"></div><div style="position:absolute;left:10.07px;top:351.57px;width:4.96px;height:1.45px;background:#3a4a9a;opacity:0.49"></div><div style="position:absolute;left:15.83px;top:351.57px;width:6.90px;height:1.45px;background:#3a4a9a;opacity:0.38"></div><div style="position:absolute;left:23.54px;top:351.57px;width:4.06px;height:1.45px;background:#3a4a9a;opacity:0.30"></div><div style="position:absolute;left:28.40px;top:351.57px;width:5.22px;height:1.45px;background:#3a4a9a;opacity:0.33"></div><div style="position:absolute;left:10.07px;top:354.75px;width:2.76px;height:1.45px;background:#b04ad8;opacity:0.28"></div><div style="position:absolute;left:13.63px;top:354.75px;width:2.02px;height:1.45px;background:#b04ad8;opacity:0.43"></div><div style="position:absolute;left:16.46px;top:354.75px;width:2.61px;height:1.45px;background:#b04ad8;opacity:0.49"></div><div style="position:absolute;left:19.87px;top:354.75px;width:2.44px;height:1.45px;background:#b04ad8;opacity:0.47"></div><div style="position:absolute;left:23.11px;top:354.75px;width:2.64px;height:1.45px;background:#b04ad8;opacity:0.28"></div><div style="position:absolute;left:26.55px;top:354.75px;width:1.72px;height:1.45px;background:#b04ad8;opacity:0.33"></div><div style="position:absolute;left:13.44px;top:356.33px;width:5.67px;height:1.45px;background:#3a4a9a;opacity:0.32"></div><div style="position:absolute;left:19.91px;top:356.33px;width:2.25px;height:1.45px;background:#3a4a9a;opacity:0.45"></div><div style="position:absolute;left:22.96px;top:356.33px;width:1.26px;height:1.45px;background:#3a4a9a;opacity:0.47"></div><div style="position:absolute;left:13.44px;top:357.92px;width:5.65px;height:1.45px;background:#3a4a9a;opacity:0.30"></div><div style="position:absolute;left:19.89px;top:357.92px;width:5.14px;height:1.45px;background:#3a4a9a;opacity:0.44"></div><div style="position:absolute;left:25.84px;top:357.92px;width:4.30px;height:1.45px;background:#3a4a9a;opacity:0.49"></div><div style="position:absolute;left:30.94px;top:357.92px;width:3.27px;height:1.45px;background:#3a4a9a;opacity:0.49"></div><div style="position:absolute;left:35.01px;top:357.92px;width:5.59px;height:1.45px;background:#3a4a9a;opacity:0.28"></div><div style="position:absolute;left:41.39px;top:357.92px;width:2.07px;height:1.45px;background:#3a4a9a;opacity:0.42"></div><div style="position:absolute;left:44.27px;top:357.92px;width:0.17px;height:1.45px;background:#3a4a9a;opacity:0.30"></div><div style="position:absolute;left:13.44px;top:361.09px;width:3.56px;height:1.45px;background:#3a4a9a;opacity:0.44"></div><div style="position:absolute;left:16.14px;top:362.68px;width:2.83px;height:1.45px;background:#b04848;opacity:0.47"></div><div style="position:absolute;left:19.77px;top:362.68px;width:4.43px;height:1.45px;background:#b04848;opacity:0.29"></div><div style="position:absolute;left:25.00px;top:362.68px;width:3.84px;height:1.45px;background:#b04848;opacity:0.41"></div><div style="position:absolute;left:29.64px;top:362.68px;width:1.33px;height:1.45px;background:#b04848;opacity:0.43"></div><div style="position:absolute;left:16.14px;top:364.27px;width:2.72px;height:1.45px;background:#b04848;opacity:0.46"></div><div style="position:absolute;left:19.66px;top:364.27px;width:3.82px;height:1.45px;background:#b04848;opacity:0.42"></div><div style="position:absolute;left:24.28px;top:364.27px;width:5.15px;height:1.45px;background:#b04848;opacity:0.37"></div><div style="position:absolute;left:16.14px;top:365.86px;width:3.93px;height:1.45px;background:#3a4a9a;opacity:0.45"></div><div style="position:absolute;left:20.87px;top:365.86px;width:6.72px;height:1.45px;background:#3a4a9a;opacity:0.45"></div><div style="position:absolute;left:28.39px;top:365.86px;width:4.59px;height:1.45px;background:#3a4a9a;opacity:0.34"></div><div style="position:absolute;left:19.51px;top:367.44px;width:2.30px;height:1.45px;background:#b04848;opacity:0.49"></div><div style="position:absolute;left:22.61px;top:367.44px;width:5.52px;height:1.45px;background:#b04848;opacity:0.46"></div><div style="position:absolute;left:28.93px;top:367.44px;width:2.71px;height:1.45px;background:#b04848;opacity:0.41"></div><div style="position:absolute;left:13.44px;top:369.03px;width:6.89px;height:1.45px;background:#8a7a50;opacity:0.46"></div><div style="position:absolute;left:21.13px;top:369.03px;width:5.01px;height:1.45px;background:#8a7a50;opacity:0.35"></div><div style="position:absolute;left:26.94px;top:369.03px;width:3.35px;height:1.45px;background:#8a7a50;opacity:0.48"></div><div style="position:absolute;left:13.44px;top:372.20px;width:3.88px;height:1.45px;background:#3a4a9a;opacity:0.43"></div><div style="position:absolute;left:18.13px;top:372.20px;width:5.01px;height:1.45px;background:#3a4a9a;opacity:0.48"></div><div style="position:absolute;left:23.94px;top:372.20px;width:6.04px;height:1.45px;background:#3a4a9a;opacity:0.34"></div><div style="position:absolute;left:30.77px;top:372.20px;width:2.01px;height:1.45px;background:#3a4a9a;opacity:0.34"></div><div style="position:absolute;left:33.58px;top:372.20px;width:4.11px;height:1.45px;background:#3a4a9a;opacity:0.41"></div><div style="position:absolute;left:13.44px;top:375.38px;width:4.72px;height:1.45px;background:#b04ad8;opacity:0.48"></div><div style="position:absolute;left:16.14px;top:376.96px;width:2.21px;height:1.45px;background:#3a4a9a;opacity:0.46"></div><div style="position:absolute;left:19.15px;top:376.96px;width:6.06px;height:1.45px;background:#3a4a9a;opacity:0.47"></div><div style="position:absolute;left:26.01px;top:376.96px;width:4.86px;height:1.45px;background:#3a4a9a;opacity:0.34"></div><div style="position:absolute;left:31.67px;top:376.96px;width:0.64px;height:1.45px;background:#3a4a9a;opacity:0.46"></div><div style="position:absolute;left:13.44px;top:380.14px;width:5.42px;height:1.45px;background:#3a4a9a;opacity:0.48"></div><div style="position:absolute;left:19.67px;top:380.14px;width:3.73px;height:1.45px;background:#3a4a9a;opacity:0.30"></div><div style="position:absolute;left:24.20px;top:380.14px;width:4.77px;height:1.45px;background:#3a4a9a;opacity:0.46"></div><div style="position:absolute;left:29.77px;top:380.14px;width:3.00px;height:1.45px;background:#3a4a9a;opacity:0.45"></div><div style="position:absolute;left:33.57px;top:380.14px;width:6.66px;height:1.45px;background:#3a4a9a;opacity:0.33"></div><div style="position:absolute;left:41.03px;top:380.14px;width:5.03px;height:1.45px;background:#3a4a9a;opacity:0.43"></div><div style="position:absolute;left:46.86px;top:380.14px;width:4.33px;height:1.45px;background:#3a4a9a;opacity:0.33"></div><div style="position:absolute;left:51.99px;top:380.14px;width:1.21px;height:1.45px;background:#3a4a9a;opacity:0.45"></div><div style="position:absolute;left:10.07px;top:383.31px;width:5.96px;height:1.45px;background:#3a9a3a;opacity:0.38"></div><div style="position:absolute;left:16.83px;top:383.31px;width:2.44px;height:1.45px;background:#3a9a3a;opacity:0.46"></div><div style="position:absolute;left:20.07px;top:383.31px;width:5.86px;height:1.45px;background:#3a9a3a;opacity:0.33"></div><div style="position:absolute;left:26.73px;top:383.31px;width:4.90px;height:1.45px;background:#3a9a3a;opacity:0.48"></div><div style="position:absolute;left:32.43px;top:383.31px;width:6.43px;height:1.45px;background:#3a9a3a;opacity:0.39"></div><div style="position:absolute;left:39.66px;top:383.31px;width:4.38px;height:1.45px;background:#3a9a3a;opacity:0.41"></div><div style="position:absolute;left:44.84px;top:383.31px;width:1.62px;height:1.45px;background:#3a9a3a;opacity:0.32"></div><div style="position:absolute;left:10.07px;top:384.90px;width:2.90px;height:1.45px;background:#b04ad8;opacity:0.43"></div><div style="position:absolute;left:13.78px;top:384.90px;width:3.81px;height:1.45px;background:#b04ad8;opacity:0.40"></div><div style="position:absolute;left:18.39px;top:384.90px;width:4.01px;height:1.45px;background:#b04ad8;opacity:0.39"></div><div style="position:absolute;left:23.20px;top:384.90px;width:2.75px;height:1.45px;background:#b04ad8;opacity:0.29"></div><div style="position:absolute;left:26.75px;top:384.90px;width:6.99px;height:1.45px;background:#b04ad8;opacity:0.36"></div><div style="position:absolute;left:34.53px;top:384.90px;width:2.53px;height:1.45px;background:#b04ad8;opacity:0.42"></div><div style="position:absolute;left:37.87px;top:384.90px;width:5.94px;height:1.45px;background:#b04ad8;opacity:0.31"></div><div style="position:absolute;left:44.60px;top:384.90px;width:4.99px;height:1.45px;background:#b04ad8;opacity:0.36"></div><div style="position:absolute;left:50.39px;top:384.90px;width:4.60px;height:1.45px;background:#b04ad8;opacity:0.28"></div><div style="position:absolute;left:55.79px;top:384.90px;width:2.17px;height:1.45px;background:#b04ad8;opacity:0.50"></div><div style="position:absolute;left:58.75px;top:384.90px;width:1.86px;height:1.45px;background:#b04ad8;opacity:0.39"></div><div style="position:absolute;left:13.44px;top:386.49px;width:4.84px;height:1.45px;background:#3a4a9a;opacity:0.34"></div><div style="position:absolute;left:19.08px;top:386.49px;width:5.90px;height:1.45px;background:#3a4a9a;opacity:0.37"></div><div style="position:absolute;left:25.78px;top:386.49px;width:6.73px;height:1.45px;background:#3a4a9a;opacity:0.45"></div><div style="position:absolute;left:33.31px;top:386.49px;width:6.09px;height:1.45px;background:#3a4a9a;opacity:0.49"></div><div style="position:absolute;left:40.20px;top:386.49px;width:2.89px;height:1.45px;background:#3a4a9a;opacity:0.29"></div><div style="position:absolute;left:4.01px;top:389.66px;width:2.02px;height:1.45px;background:#b04ad8;opacity:0.32"></div><div style="position:absolute;left:6.70px;top:391.25px;width:2.42px;height:1.45px;background:#b04848;opacity:0.29"></div><div style="position:absolute;left:9.92px;top:391.25px;width:4.79px;height:1.45px;background:#b04848;opacity:0.47"></div><div style="position:absolute;left:15.51px;top:391.25px;width:4.29px;height:1.45px;background:#b04848;opacity:0.49"></div><div style="position:absolute;left:20.60px;top:391.25px;width:6.55px;height:1.45px;background:#b04848;opacity:0.29"></div><div style="position:absolute;left:27.95px;top:391.25px;width:4.99px;height:1.45px;background:#b04848;opacity:0.37"></div><div style="position:absolute;left:33.74px;top:391.25px;width:1.27px;height:1.45px;background:#b04848;opacity:0.49"></div><div style="position:absolute;left:4.01px;top:394.42px;width:3.29px;height:1.45px;background:#3a4a9a;opacity:0.40"></div><div style="position:absolute;left:8.10px;top:394.42px;width:5.20px;height:1.45px;background:#3a4a9a;opacity:0.49"></div><div style="position:absolute;left:14.10px;top:394.42px;width:5.35px;height:1.45px;background:#3a4a9a;opacity:0.37"></div><div style="position:absolute;left:20.25px;top:394.42px;width:4.24px;height:1.45px;background:#3a4a9a;opacity:0.32"></div><div style="position:absolute;left:25.29px;top:394.42px;width:6.83px;height:1.45px;background:#3a4a9a;opacity:0.50"></div><div style="position:absolute;left:4.01px;top:396.01px;width:3.11px;height:1.45px;background:#3a9a3a;opacity:0.29"></div><div style="position:absolute;left:7.92px;top:396.01px;width:3.28px;height:1.45px;background:#3a9a3a;opacity:0.36"></div><div style="position:absolute;left:12.00px;top:396.01px;width:6.51px;height:1.45px;background:#3a9a3a;opacity:0.48"></div><div style="position:absolute;left:19.31px;top:396.01px;width:6.19px;height:1.45px;background:#3a9a3a;opacity:0.29"></div><div style="position:absolute;left:26.30px;top:396.01px;width:5.93px;height:1.45px;background:#3a9a3a;opacity:0.44"></div><div style="position:absolute;left:33.03px;top:396.01px;width:5.23px;height:1.45px;background:#3a9a3a;opacity:0.50"></div><div style="position:absolute;left:39.06px;top:396.01px;width:2.28px;height:1.45px;background:#3a9a3a;opacity:0.31"></div><div style="position:absolute;left:42.14px;top:396.01px;width:5.77px;height:1.45px;background:#3a9a3a;opacity:0.49"></div><div style="position:absolute;left:48.72px;top:396.01px;width:5.38px;height:1.45px;background:#3a9a3a;opacity:0.35"></div><div style="position:absolute;left:54.90px;top:396.01px;width:4.96px;height:1.45px;background:#3a9a3a;opacity:0.45"></div><div style="position:absolute;left:60.66px;top:396.01px;width:2.53px;height:1.45px;background:#3a9a3a;opacity:0.35"></div><div style="position:absolute;left:63.98px;top:396.01px;width:3.29px;height:1.45px;background:#3a9a3a;opacity:0.31"></div><div style="position:absolute;left:68.07px;top:396.01px;width:4.41px;height:1.45px;background:#3a9a3a;opacity:0.32"></div><div style="position:absolute;left:73.28px;top:396.01px;width:3.19px;height:1.45px;background:#3a9a3a;opacity:0.31"></div><div style="position:absolute;left:77.27px;top:396.01px;width:5.39px;height:1.45px;background:#3a9a3a;opacity:0.28"></div><div style="position:absolute;left:83.46px;top:396.01px;width:5.59px;height:1.45px;background:#3a9a3a;opacity:0.32"></div><div style="position:absolute;left:89.84px;top:396.01px;width:2.18px;height:1.45px;background:#3a9a3a;opacity:0.48"></div><div style="position:absolute;left:92.82px;top:396.01px;width:2.83px;height:1.45px;background:#3a9a3a;opacity:0.49"></div><div style="position:absolute;left:4.01px;top:399.18px;width:6.33px;height:1.45px;background:#3a4a9a;opacity:0.48"></div><div style="position:absolute;left:11.14px;top:399.18px;width:2.30px;height:1.45px;background:#3a4a9a;opacity:0.38"></div><div style="position:absolute;left:4.01px;top:400.77px;width:2.48px;height:1.45px;background:#3a4a9a;opacity:0.48"></div><div style="position:absolute;left:7.29px;top:400.77px;width:6.15px;height:1.45px;background:#3a4a9a;opacity:0.42"></div><div style="position:absolute;left:4.01px;top:403.94px;width:4.26px;height:1.45px;background:#b04ad8;opacity:0.35"></div><div style="position:absolute;left:9.07px;top:403.94px;width:6.12px;height:1.45px;background:#b04ad8;opacity:0.39"></div><div style="position:absolute;left:15.99px;top:403.94px;width:0.15px;height:1.45px;background:#b04ad8;opacity:0.31"></div><div style="position:absolute;left:6.70px;top:405.53px;width:3.11px;height:1.45px;background:#8a7a50;opacity:0.29"></div><div style="position:absolute;left:10.61px;top:405.53px;width:5.57px;height:1.45px;background:#8a7a50;opacity:0.40"></div><div style="position:absolute;left:16.98px;top:405.53px;width:2.72px;height:1.45px;background:#8a7a50;opacity:0.47"></div><div style="position:absolute;left:20.51px;top:405.53px;width:3.33px;height:1.45px;background:#8a7a50;opacity:0.37"></div><div style="position:absolute;left:24.64px;top:405.53px;width:2.78px;height:1.45px;background:#8a7a50;opacity:0.34"></div><div style="position:absolute;left:28.22px;top:405.53px;width:6.20px;height:1.45px;background:#8a7a50;opacity:0.35"></div><div style="position:absolute;left:35.21px;top:405.53px;width:2.84px;height:1.45px;background:#8a7a50;opacity:0.39"></div><div style="position:absolute;left:38.85px;top:405.53px;width:3.59px;height:1.45px;background:#8a7a50;opacity:0.48"></div><div style="position:absolute;left:43.24px;top:405.53px;width:2.57px;height:1.45px;background:#8a7a50;opacity:0.50"></div><div style="position:absolute;left:46.61px;top:405.53px;width:1.87px;height:1.45px;background:#8a7a50;opacity:0.48"></div></div>

<!-- panel -->
<div class="abs" style="left:213px;top:501px;width:787px;height:76px;background:#ffffff;border-top:1px solid #d4d4d4"></div>
<div class="abs" style="left:229px;top:510px;font:400 8.6px/12px 'Liberation Sans', sans-serif;color:#6f6f6f">PROBLEMAS</div>
<div class="abs" style="left:290px;top:509.5px;width:17.5px;height:13px;border-radius:7px;background:#c4c4c4;font:400 8.8px/13px 'Liberation Sans', sans-serif;color:#333;text-align:center">12</div>
<div class="abs" style="left:325px;top:510px;font:400 8.73px/12px 'Liberation Sans', sans-serif;color:#6f6f6f">SALIDA</div>
<div class="abs" style="left:375px;top:510px;font:400 8.73px/12px 'Liberation Sans', sans-serif;color:#6f6f6f">CONSOLA DE DEPURACIÓN</div>
<div class="abs" style="left:510.5px;top:510px;font:400 8.6px/12px 'Liberation Sans', sans-serif;color:#424242">TERMINAL</div>
<div class="abs" style="left:509.5px;top:525.8px;width:47px;height:1px;background:#424242"></div>
<div class="abs" style="left:574.5px;top:510px;font:400 8.5px/12px 'Liberation Sans', sans-serif;color:#6f6f6f">JUPYTER</div>
<svg style="position:absolute;left:862px;top:509.5px" width="12" height="12" viewBox="0 0 12 12"><rect x="0.7" y="0.7" width="10.6" height="10.6" rx="1.2" fill="none" stroke="#616161" stroke-width="1"/><path d="M4.5 3.5 L7 6 L4.5 8.5" fill="none" stroke="#616161" stroke-width="1"/></svg>
<div class="abs" style="left:877.5px;top:509.5px;font:400 9.6px/13px 'Liberation Sans', sans-serif;color:#616161">zsh</div>
<svg style="position:absolute;left:900px;top:509.5px" width="12" height="12" viewBox="0 0 12 12"><path d="M6 0.5 V11.5 M0.5 6 H11.5" stroke="#616161" stroke-width="1.1"/></svg>
<svg style="position:absolute;left:916px;top:514px" width="7" height="5" viewBox="0 0 7 5"><path d="M0.7 0.7 L3.5 3.5 L6.3 0.7" fill="none" stroke="#7a7a7a" stroke-width="0.8"/></svg>
<svg style="position:absolute;left:931.5px;top:509.5px" width="12" height="12" viewBox="0 0 12 12"><rect x="0.7" y="0.7" width="10.6" height="10.6" rx="1.2" fill="none" stroke="#616161" stroke-width="1"/><path d="M6 0.7 V11.3" stroke="#616161" stroke-width="1"/></svg>
<svg style="position:absolute;left:952px;top:509.5px" width="11" height="12" viewBox="0 0 11 12"><path d="M0.5 2.2 H10.5 M3.5 2.2 V1 H7.5 V2.2 M1.8 2.2 L2.3 11.2 H8.7 L9.2 2.2 M4 4.5 V9.5 M5.5 4.5 V9.5 M7 4.5 V9.5" fill="none" stroke="#616161" stroke-width="0.9"/></svg>
<svg style="position:absolute;left:974px;top:512px" width="10" height="7" viewBox="0 0 10 7"><path d="M0.8 6 L5 1.2 L9.2 6" fill="none" stroke="#616161" stroke-width="1.1"/></svg>
<svg style="position:absolute;left:990px;top:510.5px" width="10" height="10" viewBox="0 0 10 10"><path d="M1 1 L9 9 M9 1 L1 9" stroke="#616161" stroke-width="1.1"/></svg>
<svg style="position:absolute;left:218px;top:532.5px" width="8" height="8" viewBox="0 0 8 8"><circle cx="3.8" cy="4" r="2.6" fill="none" stroke="#a8a8a8" stroke-width="0.8"/></svg>
<div class="abs" style="left:229.5px;top:530px;font:9.24px/14px 'Liberation Mono', monospace;color:#333;white-space:pre;-webkit-text-stroke:0.05px #333;transform:scaleY(1.1);transform-origin:0 9.5px">rhysd@Rhyss-MacBook-Pro optimisation %</div>

<!-- status bar -->
<div class="abs" style="left:0;top:577.4px;width:1000px;height:17px;background:#3579c8"></div>
<div class="abs" style="left:0;top:577.4px;width:26px;height:17px;background:#3b835a"></div>
<svg style="position:absolute;left:0;top:589px" width="5" height="5" viewBox="0 0 5 5"><path d="M0 1.2 Q0.6 4.4 4 5 H0z" fill="#cfcfcf"/></svg>
<svg style="position:absolute;left:8px;top:580px" width="11" height="11" viewBox="0 0 11 11"><path d="M1 3.2 L4.3 6.5 L1 9.8 M8.2 0.8 L4.9 3.8 L8.2 6.8" fill="none" stroke="#e8f0ea" stroke-width="0.95"/></svg>
<svg style="position:absolute;left:33px;top:580.5px" width="11" height="11" viewBox="0 0 11 11"><circle cx="5.5" cy="5.5" r="4.6" fill="none" stroke="#fff" stroke-width="0.9"/><path d="M3.6 3.6 L7.4 7.4 M7.4 3.6 L3.6 7.4" stroke="#fff" stroke-width="0.9"/></svg>
<div class="abs" style="left:46.5px;top:579.5px;font:400 9.8px/13px 'Liberation Sans', sans-serif;color:#fff">0</div>
<svg style="position:absolute;left:55.5px;top:580px" width="12" height="11" viewBox="0 0 12 11"><path d="M6 1 L11 10.2 H1z M6 4.2 V7.3 M6 8.3 V9" fill="none" stroke="#fff" stroke-width="0.9"/></svg>
<div class="abs" style="left:68.5px;top:579.5px;font:400 9.8px/13px 'Liberation Sans', sans-serif;color:#fff">12</div>
<div class="abs" style="left:508.5px;top:579.5px;font:400 9.52px/13px 'Liberation Sans', sans-serif;color:#fff;white-space:nowrap">Lín. 137, col. 15</div>
<div class="abs" style="left:589.5px;top:579.5px;font:400 9.85px/13px 'Liberation Sans', sans-serif;color:#fff;white-space:nowrap">Espacios: 4</div>
<div class="abs" style="left:653.5px;top:579.5px;font:400 9.7px/13px 'Liberation Sans', sans-serif;color:#fff;white-space:nowrap">UTF-8</div>
<div class="abs" style="left:695.5px;top:579.5px;font:400 9.7px/13px 'Liberation Sans', sans-serif;color:#fff;white-space:nowrap">LF</div>
<div class="abs" style="left:718px;top:579.5px;font:400 9.5px/13px 'Liberation Sans', sans-serif;color:#fff;white-space:nowrap">{</div>
<svg style="position:absolute;left:722.5px;top:584px" width="6" height="8" viewBox="0 0 6 8"><path d="M0.5 0.5 q3 0 2.5 3" fill="none" stroke="#fff" stroke-width="0.8"/><circle cx="3" cy="5.5" r="1.6" fill="none" stroke="#fff" stroke-width="0.8"/></svg>
<div class="abs" style="left:733.5px;top:579.5px;font:400 9.8px/13px 'Liberation Sans', sans-serif;color:#fff;white-space:nowrap">Python</div>
<div class="abs" style="left:778.5px;top:579.5px;font:400 10.45px/13px 'Liberation Sans', sans-serif;color:#fff;white-space:nowrap">3.9.6 64-bit</div>
<svg style="position:absolute;left:845.5px;top:580px" width="9" height="11" viewBox="0 0 9 11"><circle cx="4.5" cy="4.5" r="3.8" fill="none" stroke="#fff" stroke-width="0.8"/><circle cx="4.5" cy="4.5" r="1.8" fill="none" stroke="#fff" stroke-width="0.8"/><path d="M4.5 6.3 V10.5" stroke="#fff" stroke-width="1"/></svg>
<div class="abs" style="left:858px;top:579.5px;font:400 9.6px/13px 'Liberation Sans', sans-serif;color:#fff;white-space:nowrap">Go Live</div>
<svg style="position:absolute;left:905px;top:581px" width="10" height="9" viewBox="0 0 10 9"><path d="M0.8 4.8 L3.5 7.8 L9.2 0.8" fill="none" stroke="#fff" stroke-width="0.9"/></svg>
<div class="abs" style="left:918.5px;top:579.5px;font:400 10.1px/13px 'Liberation Sans', sans-serif;color:#fff;white-space:nowrap">Prettier</div>
<svg style="position:absolute;left:964.5px;top:580px" width="12" height="11" viewBox="0 0 12 11"><path d="M3 1 H11 V6 H7 L5 8.5 V6 H5 M4.5 5 a2 2 0 1 0 0.1 0 M1 10.5 q0.5 -3 3.5 -3 q3 0 3.5 3" fill="none" stroke="#fff" stroke-width="0.8"/></svg>
<svg style="position:absolute;left:988px;top:580px" width="11" height="11" viewBox="0 0 11 11"><path d="M5.5 1 q-3.5 0 -3.5 4 v3 l-1 1 h9 l-1 -1 v-3 q0 -4 -3.5 -4z M4.3 10 h2.4" fill="none" stroke="#fff" stroke-width="0.8"/></svg>
</div>
</body></html>
